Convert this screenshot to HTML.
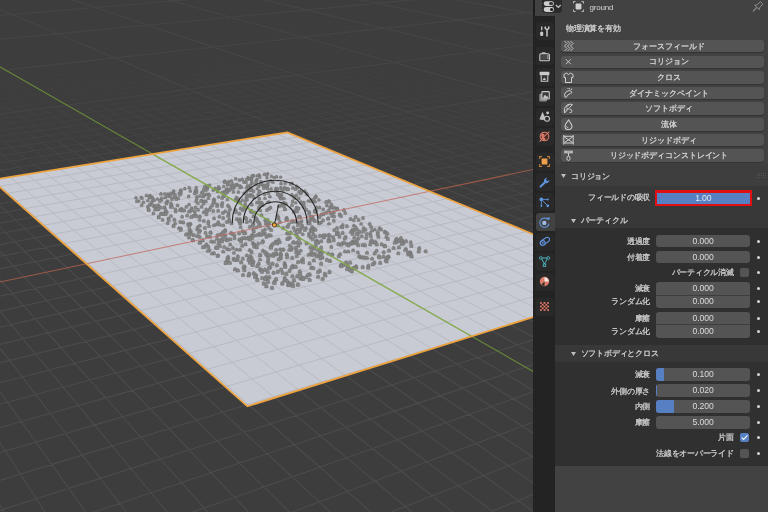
<!DOCTYPE html>
<html><head><meta charset="utf-8">
<style>
*{box-sizing:border-box}
html,body{margin:0;padding:0;width:768px;height:512px;overflow:hidden;background:#3d3d3d;font-family:"Liberation Sans",sans-serif}
.abs{position:absolute}
#props{-webkit-text-stroke:0.25px currentColor;position:absolute;left:533px;top:0;width:235px;height:512px;background:#424242;will-change:transform}
.t{position:absolute;color:#d6d6d6;font-size:7.7px;letter-spacing:-0.2px;line-height:10px;white-space:nowrap}
.btn{position:absolute;left:28px;width:203px;height:12.6px;background:#545454;border-radius:3px;box-shadow:0 1px 1px #333}
.btn .lbl{position:absolute;left:13px;right:0;top:1.9px;text-align:center;color:#d8d8d8;font-size:7.7px;letter-spacing:-0.1px;line-height:10px;white-space:nowrap}
.btn svg{position:absolute;left:3px;top:1px}
.fld{position:absolute;left:123px;width:94.3px;background:#545454;border-radius:3px;overflow:hidden}
.fld .v{-webkit-text-stroke:0;position:absolute;left:0;right:0;text-align:center;color:#dcdcdc;font-size:8.6px;line-height:12.4px;top:0}
.lab{position:absolute;right:118px;color:#d2d2d2;font-size:7.7px;letter-spacing:-0.3px;line-height:10px;white-space:nowrap;text-align:right}
.dot{position:absolute;left:223.8px;width:3px;height:3px;border-radius:50%;background:#d8d8d8}
.cb{position:absolute;left:206.8px;width:9px;height:9px;border-radius:2px;background:#545454}
.tab{position:absolute;left:3px;width:18.5px;background:#2a2a2a;border-radius:3px}
.ti{position:absolute;left:6px;width:11px;height:11px}
</style></head><body>
<svg width="533" height="512" viewBox="0 0 533 512" style="position:absolute;left:0;top:0"><defs><linearGradient id="fade" gradientUnits="userSpaceOnUse" x1="0" y1="0" x2="0" y2="512"><stop offset="0" stop-color="#fff" stop-opacity="0.05"/><stop offset="0.1" stop-color="#fff" stop-opacity="0.3"/><stop offset="0.2" stop-color="#fff" stop-opacity="0.65"/><stop offset="0.35" stop-color="#fff" stop-opacity="0.95"/><stop offset="1" stop-color="#fff" stop-opacity="1"/></linearGradient><mask id="m" maskUnits="userSpaceOnUse" x="0" y="0" width="533" height="512"><rect width="533" height="512" fill="url(#fade)"/></mask><clipPath id="cp"><rect width="533" height="512"/></clipPath></defs><rect width="533" height="512" fill="#3d3d3d"/><g clip-path="url(#cp)" stroke="#4b4b4b" stroke-width="1.15" fill="none" stroke-linecap="round"><path stroke-opacity="0.1" d="M-1.3 82.7L-36.1 61.4M13 82.6L-23.1 61.2M41.5 82.3L2.8 60.9M2.8 60.9L-29.5 43.1M55.8 82.1L15.8 60.8M15.8 60.8L-17.6 43M70 82L28.7 60.6M28.7 60.6L-5.8 42.8M84.3 81.8L41.6 60.5M41.6 60.5L6.1 42.7M98.5 81.7L54.5 60.3M54.5 60.3L17.9 42.5M112.7 81.5L67.4 60.2M67.4 60.2L29.7 42.4M126.9 81.4L80.3 60M80.3 60L41.5 42.2M141.1 81.2L93.2 59.9M93.2 59.9L53.3 42.1M155.2 81.1L106.1 59.7M106.1 59.7L65.1 41.9M183.5 80.8L131.7 59.4M131.7 59.4L88.6 41.7M88.6 41.7L52 26.6M531.7 86.4L605.6 74.7M197.6 80.6L144.6 59.3M144.6 59.3L100.3 41.5M100.3 41.5L62.9 26.5M501.3 85.5L576.8 73.9M157.4 59.1L112 41.4M112 41.4L73.7 26.3M471.1 84.7L548.1 73.1M170.1 59L123.7 41.2M123.7 41.2L84.5 26.2M441.1 83.9L519.7 72.3M519.7 72.3L591.1 61.7M182.9 58.9L135.4 41.1M135.4 41.1L95.2 26.1M411.4 83.1L491.5 71.5M491.5 71.5L564.3 61M195.7 58.7L147.1 41M147.1 41L106 25.9M381.9 82.3L463.4 70.7M463.4 70.7L537.6 60.2M537.6 60.2L605.3 50.6M208.4 58.6L158.8 40.8M158.8 40.8L116.8 25.8M435.6 70L511.1 59.5M511.1 59.5L580.1 49.9M221.2 58.4L170.4 40.7M170.4 40.7L127.5 25.7M408 69.2L484.9 58.7M484.9 58.7L555 49.2M233.9 58.3L182.1 40.5M182.1 40.5L138.2 25.5M380.6 68.4L458.8 58M458.8 58L530.2 48.5M259.3 58L205.3 40.2M205.3 40.2L159.6 25.2M326.4 66.9L407.2 56.5M407.2 56.5L481 47.1M272 57.8L216.9 40.1M216.9 40.1L170.3 25.1M299.6 66.2L381.7 55.8M381.7 55.8L456.7 46.4M456.7 46.4L525.3 37.7M284.6 57.7L228.5 40M228.5 40L181 25M273 65.5L356.4 55.1M356.4 55.1L432.6 45.7M432.6 45.7L502.3 37M297.3 57.5L240.1 39.8M240.1 39.8L191.7 24.8M246.6 64.7L331.3 54.4M331.3 54.4L408.6 45M408.6 45L479.4 36.4M309.9 57.4L251.6 39.7M251.6 39.7L202.3 24.7M125.7 75.3L220.4 64M220.4 64L306.4 53.7M306.4 53.7L384.8 44.3M384.8 44.3L456.7 35.7M322.5 57.3L263.2 39.5M263.2 39.5L213 24.6M98.2 74.6L194.3 63.3M194.3 63.3L281.6 53M281.6 53L361.2 43.6M361.2 43.6L434.2 35M407.8 78.4L335.2 57.1M335.2 57.1L274.7 39.4M274.7 39.4L223.6 24.4M70.9 73.9L168.4 62.6M168.4 62.6L257 52.3M257 52.3L337.8 42.9M337.8 42.9L411.8 34.4M421.7 78.2L347.8 57M347.8 57L286.2 39.3M286.2 39.3L234.2 24.3M-65.7 85.6L43.8 73.1M43.8 73.1L142.8 61.8M142.8 61.8L232.6 51.6M232.6 51.6L314.6 42.3M314.6 42.3L389.6 33.7M435.5 78.1L360.3 56.8M360.3 56.8L297.7 39.1M297.7 39.1L244.8 24.2M-94.1 84.8L16.9 72.4M16.9 72.4L117.3 61.1M117.3 61.1L208.4 50.9M208.4 50.9L291.5 41.6M291.5 41.6L367.5 33.1M463.3 77.8L385.5 56.5M385.5 56.5L320.7 38.8M320.7 38.8L266 23.9M-36.3 70.9L66.8 59.7M66.8 59.7L160.4 49.6M160.4 49.6L245.8 40.3M245.8 40.3L323.9 31.8M323.9 31.8L395.8 24M477.1 77.6L398 56.4M398 56.4L332.2 38.7M332.2 38.7L276.5 23.8M-62.6 70.2L41.9 59M41.9 59L136.7 48.9M136.7 48.9L223.2 39.7M223.2 39.7L302.4 31.2M302.4 31.2L375.1 23.4M589.4 103.5L490.9 77.5M490.9 77.5L410.6 56.2M410.6 56.2L343.6 38.6M343.6 38.6L287.1 23.6M-88.8 69.5L17.1 58.4M17.1 58.4L113.2 48.2M113.2 48.2L200.8 39M200.8 39L281 30.6M281 30.6L354.6 22.8M604.8 103.3L504.8 77.3M504.8 77.3L423.1 56.1M423.1 56.1L355.1 38.4M355.1 38.4L297.6 23.5M-7.5 57.7L89.8 47.6M89.8 47.6L178.5 38.4M178.5 38.4L259.7 29.9M259.7 29.9L334.3 22.2M620.2 103.2L518.6 77.2M518.6 77.2L435.6 56M435.6 56L366.5 38.3M366.5 38.3L308.1 23.4M-32 57L66.6 46.9M66.6 46.9L156.4 37.7M156.4 37.7L238.6 29.3M238.6 29.3L314.1 21.6M635.6 103L532.4 77M532.4 77L448.1 55.8M448.1 55.8L377.9 38.2M377.9 38.2L318.6 23.2M-56.3 56.3L43.5 46.3M43.5 46.3L134.4 37.1M134.4 37.1L217.7 28.7M217.7 28.7L294.1 21M546.1 76.9L460.6 55.7M460.6 55.7L389.3 38M389.3 38L329.1 23.1M-80.4 55.7L20.6 45.6M20.6 45.6L112.6 36.5M112.6 36.5L196.9 28.1M559.9 76.7L473 55.5M473 55.5L400.7 37.9M400.7 37.9L339.6 23M-104.3 55L-2.1 45M-2.1 45L91 35.9M91 35.9L176.2 27.5M573.7 76.6L485.5 55.4M485.5 55.4L412.1 37.7M412.1 37.7L350.1 22.8M-24.7 44.3L69.5 35.2M601.1 76.3L510.3 55.1M510.3 55.1L434.8 37.5M-69.4 43.1L27 34M614.8 76.1L522.7 55M522.7 55L446.2 37.3M628.5 76L535.2 54.8M535.2 54.8L457.5 37.2M547.5 54.7L468.8 37.1M559.9 54.5L480.1 36.9M572.3 54.4L491.4 36.8"/><path stroke-opacity="0.2" d="M9.3 109.1L-30 83M25.2 109L-15.6 82.9M41.1 108.8L-1.3 82.7M57 108.7L13 82.6M88.8 108.3L41.5 82.3M104.6 108.2L55.8 82.1M120.5 108L70 82M136.3 107.9L84.3 81.8M152.1 107.7L98.5 81.7M167.9 107.6L112.7 81.5M532.9 118.1L614 103.6M183.7 107.4L126.9 81.4M497.7 117.2L580.7 102.7M199.5 107.3L141.1 81.2M462.7 116.3L547.7 101.9M215.2 107.1L155.2 81.1M427.9 115.4L514.8 101M514.8 101L593.1 88M246.7 106.8L183.5 80.8M449.9 99.3L531.7 86.4M417.8 98.4L501.3 85.5M211.7 80.5L157.4 59.1M386 97.6L471.1 84.7M225.8 80.3L170.1 59M354.4 96.7L441.1 83.9M239.9 80.2L182.9 58.9M322.9 95.9L411.4 83.1M254 80L195.7 58.7M291.8 95.1L381.9 82.3M268 79.9L208.4 58.6M352.6 81.5L435.6 70M282 79.7L221.2 58.4M230.1 93.4L323.5 80.7M323.5 80.7L408 69.2M296.1 79.6L233.9 58.3M199.6 92.6L294.6 79.9M294.6 79.9L380.6 68.4M403.3 105.3L324.1 79.3M324.1 79.3L259.3 58M29.8 105.1L139.2 91M139.2 91L237.5 78.4M237.5 78.4L326.4 66.9M418.8 105.1L338 79.1M338 79.1L272 57.8M-126.2 120L-1.9 104.3M-1.9 104.3L109.3 90.2M109.3 90.2L209.2 77.6M209.2 77.6L299.6 66.2M434.4 105L352 79M352 79L284.6 57.7M-33.3 103.4L79.6 89.4M79.6 89.4L181.2 76.8M181.2 76.8L273 65.5M450 104.8L366 78.8M366 78.8L297.3 57.5M-64.6 102.6L50.2 88.7M50.2 88.7L153.3 76.1M153.3 76.1L246.6 64.7M465.5 104.7L379.9 78.7M379.9 78.7L309.9 57.4M-95.6 101.8L20.9 87.9M20.9 87.9L125.7 75.3M590.1 137L481 104.5M481 104.5L393.8 78.5M393.8 78.5L322.5 57.3M-8.2 87.1L98.2 74.6M607.7 136.9L496.6 104.4M496.6 104.4L407.8 78.4M-37 86.3L70.9 73.9M625.2 136.7L512.1 104.2M512.1 104.2L421.7 78.2M642.7 136.6L527.5 104.1M527.5 104.1L435.5 78.1M558.5 103.8L463.3 77.8M573.9 103.6L477.1 77.6"/><path stroke-opacity="0.3" d="M4.4 142.1L-38.6 109.6M22.3 141.9L-22.6 109.4M40.3 141.8L-6.7 109.3M58.2 141.6L9.3 109.1M76.1 141.5L25.2 109M94.1 141.3L41.1 108.8M503.2 156.3L594.8 138M518.1 136.1L604.2 119.9M480.1 135.2L568.4 119M442.4 134.2L532.9 118.1M405 133.3L497.7 117.2M367.8 132.3L462.7 116.3M359.2 113.6L449.9 99.3M262.4 106.6L197.6 80.6M325.2 112.7L417.8 98.4M278.1 106.5L211.7 80.5M291.5 111.8L386 97.6M293.8 106.3L225.8 80.3M258 111L354.4 96.7M309.5 106.2L239.9 80.2M114.9 126L224.7 110.1M224.7 110.1L322.9 95.9M325.2 106L254 80M79.7 125.1L191.6 109.3M191.6 109.3L291.8 95.1M431.8 138.4L340.8 105.9M340.8 105.9L268 79.9M44.8 124.2L158.8 108.4M158.8 108.4L260.8 94.2M260.8 94.2L352.6 81.5M449.4 138.3L356.4 105.7M356.4 105.7L282 79.7M-120.4 141.2L10.2 123.4M10.2 123.4L126.2 107.6M126.2 107.6L230.1 93.4M467.1 138.1L372.1 105.6M372.1 105.6L296.1 79.6M-24.3 122.5L93.9 106.7M93.9 106.7L199.6 92.6M502.3 137.8L403.3 105.3M-92.4 120.8L29.8 105.1M519.9 137.7L418.8 105.1M537.5 137.5L434.4 105M555 137.3L450 104.8M572.6 137.2L465.5 104.7"/><path stroke-opacity="0.4" d="M111.9 141.2L57 108.7M533.2 180L628 159.3M147.7 140.9L88.8 108.3M165.5 140.7L104.6 108.2M183.4 140.6L120.5 108M462.2 155.3L556.3 137.1M201.2 140.4L136.3 107.9M421.5 154.3L518.1 136.1M219 140.2L152.1 107.7M381 153.3L480.1 135.2M236.8 140.1L167.9 107.6M340.8 152.3L442.4 134.2M254.6 139.9L183.7 107.4M272.4 139.8L199.5 107.3M290.2 139.6L215.2 107.1M330.9 131.4L427.9 115.4M325.7 139.3L246.7 106.8M257.9 129.6L359.2 113.6M343.4 139.2L262.4 106.6M105.5 146.6L221.8 128.7M221.8 128.7L325.2 112.7M361.1 139L278.1 106.5M67.2 145.7L185.9 127.8M185.9 127.8L291.5 111.8M378.8 138.9L293.8 106.3M29.2 144.8L150.3 126.9M150.3 126.9L258 111M396.5 138.7L309.5 106.2M-8.6 143.9L114.9 126M414.1 138.6L325.2 106M-46.1 143L79.7 125.1M548.8 180.2L431.8 138.4M-83.4 142.1L44.8 124.2M569 180.1L449.4 138.3M589.2 179.9L467.1 138.1M629.7 179.6L502.3 137.8M649.9 179.5L519.9 137.7M670.1 179.4L537.5 137.5"/><path stroke-opacity="0.5" d="M18.3 184L-31.6 142.4M38.9 183.9L-13.6 142.2M59.4 183.7L4.4 142.1M79.9 183.6L22.3 141.9M100.4 183.4L40.3 141.8M522.3 205.6L623.7 182.1M443.9 177.9L544.5 157.3M399.7 176.8L503.2 156.3M355.8 175.8L462.2 155.3M300.9 151.4L405 133.3M261.3 150.4L367.8 132.3M222 149.4L330.9 131.4M427 181.1L325.7 139.3M15.2 167.9L144.1 147.6M144.1 147.6L257.9 129.6M447.4 180.9L343.4 139.2M-26.1 167L105.5 146.6M467.7 180.8L361.1 139M-67.2 166L67.2 145.7M487.9 180.7L378.8 138.9M-108 165L29.2 144.8M508.2 180.5L396.5 138.7M528.5 180.4L414.1 138.6"/><path stroke-opacity="0.6" d="M120.9 183.3L58.2 141.6M141.4 183.1L76.1 141.5M161.9 183L94.1 141.3M473.6 204.6L578.3 181M182.4 182.8L111.9 141.2M425.2 203.5L533.2 180M223.2 182.5L147.7 140.9M243.7 182.4L165.5 140.7M264.1 182.3L183.4 140.6M284.5 182.1L201.2 140.4M312.2 174.8L421.5 154.3M304.9 182L219 140.2M268.9 173.8L381 153.3M325.3 181.8L236.8 140.1M345.7 181.7L254.6 139.9M183.2 171.8L300.9 151.4M366 181.5L272.4 139.8M140.8 170.8L261.3 150.4M386.4 181.4L290.2 139.6M-42 193.1L98.6 169.9M98.6 169.9L222 149.4M-131.9 191.1L15.2 167.9M609.6 236.5L467.7 180.8M633.4 236.3L487.9 180.7M657.2 236.2L508.2 180.5M680.9 236.1L528.5 180.4M-2.2 184.2L-49.6 142.6M406.7 181.2L307.9 139.5M307.9 139.5L231 107M231 107L169.4 80.9M169.4 80.9L118.9 59.6M118.9 59.6L76.8 41.8M76.8 41.8L41.2 26.7M41.2 26.7L10.7 13.8M10.7 13.8L-15.8 2.6M-87.1 192.1L56.8 168.9M56.8 168.9L182.9 148.5M182.9 148.5L294.3 130.5M294.3 130.5L393.5 114.5M393.5 114.5L482.3 100.1M482.3 100.1L562.3 87.2M609.5 179.8L484.7 138M484.7 138L387.7 105.4M387.7 105.4L310.1 79.4M310.1 79.4L246.6 58.1M246.6 58.1L193.7 40.4M193.7 40.4L148.9 25.4M148.9 25.4L110.6 12.5M110.6 12.5L77.4 1.4M77.4 1.4L48.3 -8.4M-58.5 121.7L61.7 105.9M61.7 105.9L169.3 91.8M169.3 91.8L266 79.1M266 79.1L353.4 67.7M353.4 67.7L432.9 57.3M432.9 57.3L505.5 47.8M505.5 47.8L572 39.1M543 103.9L449.4 77.9M449.4 77.9L372.9 56.7M372.9 56.7L309.2 39M309.2 39L255.4 24M255.4 24L209.3 11.2M209.3 11.2L169.3 0.1M169.3 0.1L134.4 -9.6M-9.8 71.7L92 60.4M92 60.4L184.3 50.2M184.3 50.2L268.5 41M268.5 41L345.7 32.4M345.7 32.4L416.5 24.6M416.5 24.6L481.9 17.4M481.9 17.4L542.4 10.7M587.4 76.4L497.9 55.2M497.9 55.2L423.5 37.6M423.5 37.6L360.6 22.7M360.6 22.7L306.7 9.9M306.7 9.9L260.1 -1.1M260.1 -1.1L219.3 -10.7M-47.1 43.7L48.2 34.6M48.2 34.6L135.3 26.3M135.3 26.3L215.4 18.7M215.4 18.7L289.2 11.6M289.2 11.6L357.4 5.1M357.4 5.1L420.6 -0.9M420.6 -0.9L479.4 -6.5M621.6 53.8L536.4 36.2M536.4 36.2L464.5 21.4M464.5 21.4L403 8.7M403 8.7L349.7 -2.3M349.7 -2.3L303.2 -11.9M-60.7 20.6L28.1 13.1M28.1 13.1L109.8 6.3M109.8 6.3L185.3 -0.1M185.3 -0.1L255.3 -6M567.2 20.1L498 7.4M498 7.4L438.2 -3.5M438.2 -3.5L385.9 -13.1M-57.6 1.2L24.8 -5M24.8 -5L101.2 -10.7"/><path stroke-opacity="0.7" d="M512.3 234.9L620.8 207.8M459 233.8L571.4 206.7M329.3 201.4L443.9 177.9M281.8 200.3L399.7 176.8M141.2 197.2L268.9 173.8M95 196.2L225.9 172.8M225.9 172.8L340.8 152.3M49 195.1L183.2 171.8M-154.9 221L3.3 194.1M3.3 194.1L140.8 170.8M514.4 236.9L386.4 181.4M562 236.7L427 181.1M585.8 236.6L447.4 180.9M538.2 236.8L406.7 181.2"/><path stroke-opacity="0.8" d="M12.6 239.5L-43.4 184.4M36.5 239.4L-22.8 184.3M84.5 239.2L18.3 184M108.4 239L38.9 183.9M132.4 238.9L59.4 183.7M503.2 268.6L619.9 237.2M156.3 238.8L79.9 183.6M406 232.7L522.3 205.6M353.4 231.6L473.6 204.6M234.6 199.3L355.8 175.8M395.2 237.6L284.5 182.1M44.6 225.1L187.8 198.2M187.8 198.2L312.2 174.8M419.1 237.4L304.9 182M-5.7 224.1L141.2 197.2M442.9 237.3L325.3 181.8M-55.8 223L95 196.2M466.8 237.2L345.7 181.7M-105.5 222L49 195.1M490.6 237.1L366 181.5M60.5 239.3L-2.2 184.2"/><path stroke-opacity="0.9" d="M444.7 267.5L565.9 236M180.2 238.7L100.4 183.4M386.5 266.3L512.3 234.9M204.1 238.6L120.9 183.3M228.1 238.4L141.4 183.1M252 238.3L161.9 183M275.9 238.2L182.4 182.8M301.2 230.5L425.2 203.5M323.6 237.9L223.2 182.5M197.6 228.3L329.3 201.4M347.5 237.8L243.7 182.4M146.3 227.3L281.8 200.3M371.4 237.7L264.1 182.3M-66.6 257.5L95.3 226.2M95.3 226.2L234.6 199.3M-121.7 256.4L44.6 225.1M607 314.7L442.9 237.3M635.8 314.7L466.8 237.2M664.5 314.6L490.6 237.1M693.2 314.5L514.4 236.9M721.9 314.5L538.2 236.8"/><path stroke-opacity="1.0" d="M9.6 521.2L1.6 507.5M1.6 507.5L-6.2 494.4M50.8 521.1L41.9 507.4M41.9 507.4L33.4 494.3M33.4 494.3L25.2 481.6M25.2 481.6L17.3 469.5M17.3 469.5L9.7 457.8M9.7 457.8L2.4 446.5M2.4 446.5L-4.7 435.6M-4.7 435.6L-11.5 425.2M92 521L82.3 507.3M82.3 507.3L72.9 494.2M72.9 494.2L63.9 481.5M63.9 481.5L55.3 469.4M55.3 469.4L47 457.7M47 457.7L39 446.4M39 446.4L31.3 435.5M31.3 435.5L23.9 425.1M23.9 425.1L16.7 415M16.7 415L9.7 405.2M9.7 405.2L3 395.8M3 395.8L-3.4 386.6M-3.4 386.6L-9.7 377.8M490.1 556.6L668.9 476.8M133.2 520.9L122.6 507.2M122.6 507.2L112.5 494.1M112.5 494.1L102.7 481.4M102.7 481.4L93.4 469.3M93.4 469.3L84.3 457.6M84.3 457.6L75.6 446.3M75.6 446.3L67.3 435.5M67.3 435.5L59.2 425M59.2 425L51.4 414.9M51.4 414.9L43.9 405.1M43.9 405.1L36.6 395.7M36.6 395.7L29.6 386.6M29.6 386.6L22.8 377.7M22.8 377.7L16.2 369.2M16.2 369.2L9.8 360.9M9.8 360.9L3.6 352.9M3.6 352.9L-2.4 345.1M-2.4 345.1L-8.2 337.6M386.1 555.9L577.2 475.8M174.4 520.8L163 507.1M163 507.1L152 494M152 494L141.5 481.3M141.5 481.3L131.4 469.2M131.4 469.2L121.7 457.5M121.7 457.5L112.3 446.2M112.3 446.2L103.2 435.4M103.2 435.4L94.5 424.9M94.5 424.9L86.1 414.8M86.1 414.8L78 405M78 405L70.1 395.6M70.1 395.6L62.6 386.5M62.6 386.5L55.2 377.7M55.2 377.7L48.1 369.1M48.1 369.1L41.2 360.8M41.2 360.8L34.6 352.8M34.6 352.8L28.1 345.1M28.1 345.1L21.8 337.5M21.8 337.5L15.7 330.2M15.7 330.2L9.8 323.1M9.8 323.1L4.1 316.2M4.1 316.2L-59.4 239.9M282.3 555.1L485.7 474.8M485.7 474.8L648.2 410.7M215.6 520.7L203.3 507M203.3 507L191.6 493.9M191.6 493.9L180.3 481.2M180.3 481.2L169.4 469.1M169.4 469.1L159 457.4M159 457.4L148.9 446.1M148.9 446.1L139.2 435.3M139.2 435.3L129.9 424.8M129.9 424.8L120.8 414.7M120.8 414.7L112.1 404.9M112.1 404.9L103.7 395.5M103.7 395.5L95.5 386.4M95.5 386.4L87.7 377.6M87.7 377.6L80 369M80 369L72.7 360.8M72.7 360.8L65.5 352.8M65.5 352.8L58.6 345M58.6 345L51.8 337.5M51.8 337.5L45.3 330.1M45.3 330.1L39 323.1M39 323.1L32.8 316.2M32.8 316.2L-35.4 239.8M178.8 554.3L394.7 473.8M394.7 473.8L566.9 409.6M256.7 520.6L243.7 506.9M243.7 506.9L231.1 493.8M231.1 493.8L219.1 481.2M219.1 481.2L207.5 469M207.5 469L196.3 457.3M196.3 457.3L185.6 446M185.6 446L175.2 435.2M175.2 435.2L165.2 424.7M165.2 424.7L155.6 414.6M155.6 414.6L146.2 404.9M146.2 404.9L137.2 395.4M137.2 395.4L128.5 386.3M128.5 386.3L120.1 377.5M120.1 377.5L112 369M112 369L104.1 360.7M104.1 360.7L96.4 352.7M96.4 352.7L89 344.9M89 344.9L81.8 337.4M81.8 337.4L74.9 330.1M74.9 330.1L68.1 323M68.1 323L61.5 316.1M61.5 316.1L-11.4 239.7M75.6 553.5L304 472.8M304 472.8L486 408.5M486 408.5L634.4 356M297.9 520.5L284 506.8M284 506.8L270.7 493.7M270.7 493.7L257.9 481.1M257.9 481.1L245.5 468.9M245.5 468.9L233.6 457.2M233.6 457.2L222.2 446M222.2 446L211.2 435.1M211.2 435.1L200.5 424.6M200.5 424.6L190.3 414.5M190.3 414.5L180.4 404.8M180.4 404.8L170.8 395.3M170.8 395.3L161.5 386.2M161.5 386.2L152.6 377.4M152.6 377.4L143.9 368.9M143.9 368.9L135.5 360.6M135.5 360.6L127.4 352.6M127.4 352.6L119.5 344.8M119.5 344.8L111.9 337.3M111.9 337.3L104.4 330M104.4 330L97.2 322.9M97.2 322.9L90.2 316M90.2 316L12.6 239.5M-27.2 552.8L213.6 471.8M213.6 471.8L405.4 407.4M405.4 407.4L561.8 354.9M339.1 520.4L324.4 506.7M324.4 506.7L310.2 493.6M310.2 493.6L296.6 481M296.6 481L283.6 468.8M283.6 468.8L271 457.1M271 457.1L258.8 445.9M258.8 445.9L247.2 435M247.2 435L235.9 424.5M235.9 424.5L225 414.4M225 414.4L214.5 404.7M214.5 404.7L204.3 395.3M204.3 395.3L194.5 386.1M194.5 386.1L185 377.3M185 377.3L175.9 368.8M175.9 368.8L167 360.5M167 360.5L158.3 352.5M158.3 352.5L150 344.8M150 344.8L141.9 337.2M141.9 337.2L134 329.9M134 329.9L126.4 322.8M126.4 322.8L118.9 316M118.9 316L36.5 239.4M-129.8 552L123.6 470.9M123.6 470.9L325.3 406.3M325.3 406.3L489.5 353.7M489.5 353.7L625.9 310.1M421.5 520.2L405.1 506.5M405.1 506.5L389.3 493.4M389.3 493.4L374.2 480.8M374.2 480.8L359.6 468.6M359.6 468.6L345.6 456.9M345.6 456.9L332.1 445.7M332.1 445.7L319.1 434.8M319.1 434.8L306.6 424.4M306.6 424.4L294.4 414.3M294.4 414.3L282.8 404.5M282.8 404.5L271.5 395.1M271.5 395.1L260.5 386M260.5 386L250 377.2M250 377.2L239.7 368.6M239.7 368.6L229.8 360.4M229.8 360.4L220.2 352.4M220.2 352.4L210.9 344.6M210.9 344.6L201.9 337.1M201.9 337.1L193.1 329.8M193.1 329.8L184.6 322.7M184.6 322.7L176.4 315.8M176.4 315.8L84.5 239.2M-55.4 468.9L166 404.1M166 404.1L346.1 351.4M346.1 351.4L495.5 307.7M495.5 307.7L621.3 270.9M462.7 520.1L445.4 506.4M445.4 506.4L428.9 493.3M428.9 493.3L413 480.7M413 480.7L397.7 468.5M397.7 468.5L382.9 456.8M382.9 456.8L368.8 445.6M368.8 445.6L355.1 434.7M355.1 434.7L341.9 424.3M341.9 424.3L329.2 414.2M329.2 414.2L316.9 404.4M316.9 404.4L305 395M305 395L293.5 385.9M293.5 385.9L282.4 377.1M282.4 377.1L271.7 368.6M271.7 368.6L261.2 360.3M261.2 360.3L251.2 352.3M251.2 352.3L241.4 344.5M241.4 344.5L231.9 337M231.9 337L222.7 329.7M222.7 329.7L213.8 322.6M213.8 322.6L205.1 315.7M205.1 315.7L108.4 239M-144.3 467.9L87 403.1M87 403.1L275 350.3M275 350.3L430.8 306.6M430.8 306.6L562.1 269.8M503.9 520L485.8 506.3M485.8 506.3L468.4 493.2M468.4 493.2L451.8 480.6M451.8 480.6L435.7 468.4M435.7 468.4L420.3 456.8M420.3 456.8L405.4 445.5M405.4 445.5L391.1 434.7M391.1 434.7L377.2 424.2M377.2 424.2L363.9 414.1M363.9 414.1L351 404.4M351 404.4L338.6 394.9M338.6 394.9L326.5 385.8M326.5 385.8L314.9 377M314.9 377L303.6 368.5M303.6 368.5L292.7 360.2M292.7 360.2L282.1 352.2M282.1 352.2L271.8 344.5M271.8 344.5L261.9 336.9M261.9 336.9L252.3 329.6M252.3 329.6L242.9 322.5M242.9 322.5L233.8 315.7M233.8 315.7L132.4 238.9M-233 467L8.2 402M8.2 402L204.2 349.2M204.2 349.2L366.5 305.4M366.5 305.4L503.2 268.6M545.1 519.9L526.1 506.2M526.1 506.2L508 493.1M508 493.1L490.5 480.5M490.5 480.5L473.8 468.3M473.8 468.3L457.6 456.7M457.6 456.7L442 445.4M442 445.4L427 434.6M427 434.6L412.6 424.1M412.6 424.1L398.6 414M398.6 414L385.1 404.3M385.1 404.3L372.1 394.8M372.1 394.8L359.5 385.7M359.5 385.7L347.3 376.9M347.3 376.9L335.5 368.4M335.5 368.4L324.1 360.1M324.1 360.1L313 352.1M313 352.1L302.3 344.4M302.3 344.4L291.9 336.9M291.9 336.9L281.8 329.6M281.8 329.6L272 322.5M272 322.5L262.5 315.6M262.5 315.6L156.3 238.8M-70.1 400.9L133.8 348.1M133.8 348.1L302.6 304.3M302.6 304.3L444.7 267.5M547.5 493L529.3 480.4M529.3 480.4L511.8 468.3M511.8 468.3L494.9 456.6M494.9 456.6L478.7 445.3M478.7 445.3L463 434.5M463 434.5L447.9 424M447.9 424L433.3 413.9M433.3 413.9L419.3 404.2M419.3 404.2L405.7 394.8M405.7 394.8L392.5 385.7M392.5 385.7L379.8 376.8M379.8 376.8L367.5 368.3M367.5 368.3L355.5 360.1M355.5 360.1L344 352.1M344 352.1L332.8 344.3M332.8 344.3L321.9 336.8M321.9 336.8L311.4 329.5M311.4 329.5L301.2 322.4M301.2 322.4L291.2 315.5M291.2 315.5L180.2 238.7M-148.1 399.8L63.7 346.9M63.7 346.9L239 303.2M239 303.2L386.5 266.3M549.8 468.2L532.3 456.5M532.3 456.5L515.3 445.2M515.3 445.2L499 434.4M499 434.4L483.3 423.9M483.3 423.9L468.1 413.8M468.1 413.8L453.4 404.1M453.4 404.1L439.2 394.7M439.2 394.7L425.5 385.6M425.5 385.6L412.2 376.8M412.2 376.8L399.4 368.2M399.4 368.2L387 360M387 360L374.9 352M374.9 352L363.3 344.2M363.3 344.2L351.9 336.7M351.9 336.7L341 329.4M341 329.4L330.3 322.3M330.3 322.3L319.9 315.5M319.9 315.5L204.1 238.6M-6 345.8L175.8 302M175.8 302L328.7 265.2M328.7 265.2L459 233.8M552 445.1L535 434.3M535 434.3L518.6 423.8M518.6 423.8L502.8 413.8M502.8 413.8L487.5 404M487.5 404L472.8 394.6M472.8 394.6L458.5 385.5M458.5 385.5L444.7 376.7M444.7 376.7L431.3 368.2M431.3 368.2L418.4 359.9M418.4 359.9L405.9 351.9M405.9 351.9L393.7 344.2M393.7 344.2L381.9 336.6M381.9 336.6L370.5 329.3M370.5 329.3L359.4 322.3M359.4 322.3L348.6 315.4M348.6 315.4L228.1 238.4M-75.3 344.7L113 300.9M113 300.9L271.2 264.1M271.2 264.1L406 232.7M553.9 423.8L537.5 413.7M537.5 413.7L521.6 403.9M521.6 403.9L506.3 394.5M506.3 394.5L491.5 385.4M491.5 385.4L477.2 376.6M477.2 376.6L463.3 368.1M463.3 368.1L449.8 359.8M449.8 359.8L436.8 351.8M436.8 351.8L424.2 344.1M424.2 344.1L412 336.6M412 336.6L400.1 329.3M400.1 329.3L388.5 322.2M388.5 322.2L377.4 315.3M377.4 315.3L252 238.3M-144.3 343.6L50.5 299.8M50.5 299.8L214.1 263M214.1 263L353.4 231.6M555.8 403.8L539.9 394.4M539.9 394.4L524.5 385.3M524.5 385.3L509.6 376.5M509.6 376.5L495.2 368M495.2 368L481.3 359.8M481.3 359.8L467.8 351.8M467.8 351.8L454.7 344M454.7 344L442 336.5M442 336.5L429.6 329.2M429.6 329.2L417.7 322.1M417.7 322.1L406.1 315.2M406.1 315.2L275.9 238.2M-11.7 298.7L157.3 261.9M157.3 261.9L301.2 230.5M544.1 359.6L529.7 351.6M529.7 351.6L515.6 343.9M515.6 343.9L502 336.3M502 336.3L488.8 329.1M488.8 329.1L475.9 322M475.9 322L463.5 315.1M463.5 315.1L323.6 237.9M-135 296.5L44.7 259.7M44.7 259.7L197.6 228.3M546.1 343.8L532 336.3M532 336.3L518.3 329M518.3 329L505.1 321.9M505.1 321.9L492.2 315M492.2 315L347.5 237.8M-11.1 258.6L146.3 227.3M547.9 328.9L534.2 321.8M534.2 321.8L520.9 315M520.9 315L371.4 237.7M549.6 314.9L395.2 237.6M578.3 314.8L419.1 237.4M380.3 520.3L364.7 506.6M364.7 506.6L349.8 493.5M349.8 493.5L335.4 480.9M335.4 480.9L321.6 468.7M321.6 468.7L308.3 457M308.3 457L295.5 445.8M295.5 445.8L283.1 434.9M283.1 434.9L271.2 424.5M271.2 424.5L259.7 414.4M259.7 414.4L248.6 404.6M248.6 404.6L237.9 395.2M237.9 395.2L227.5 386.1M227.5 386.1L217.5 377.2M217.5 377.2L207.8 368.7M207.8 368.7L198.4 360.5M198.4 360.5L189.3 352.4M189.3 352.4L180.4 344.7M180.4 344.7L171.9 337.2M171.9 337.2L163.6 329.9M163.6 329.9L155.5 322.8M155.5 322.8L147.7 315.9M147.7 315.9L60.5 239.3M-232.1 551.2L34 469.9M34 469.9L245.5 405.2M245.5 405.2L417.6 352.6M417.6 352.6L560.5 308.9"/></g><path d="M-10045.8 2403.6L1819.9 -102.3" stroke="#9a5a46" stroke-width="1.1" fill="none" clip-path="url(#cp)"/><path d="M4030.6 2368.8L-342.7 -128.8" stroke="#6a8a3a" stroke-width="1.1" fill="none" clip-path="url(#cp)"/><clipPath id="pc"><path d="M-8.2 179.9L287.4 132.4L647.3 281.5L247.4 406.3Z"/></clipPath><path d="M-8.2 179.9L287.4 132.4L647.3 281.5L247.4 406.3Z" fill="#c8cbd3"/><path clip-path="url(#pc)" d="M263.9 487L-62.8 165.3M211 472.7L750.2 291.6M292.3 477L-46 162.8M189.2 449.9L720.3 279.9M319.9 467.2L-29.4 160.3M168.9 428.6L691.9 268.7M346.6 457.8L-13.1 157.8M150 408.8L665 258.2M372.5 448.6L3 155.4M132.4 390.3L639.3 248.1M397.7 439.7L18.8 153M115.8 373L614.9 238.5M422.2 431.1L34.4 150.7M100.3 356.7L591.6 229.4M445.9 422.7L49.8 148.3M85.7 341.4L569.3 220.7M469 414.5L64.9 146.1M72 327.1L548.1 212.3M491.5 406.6L79.8 143.8M59 313.5L527.8 204.4M513.3 398.8L94.5 141.6M46.8 300.6L508.3 196.7M534.6 391.3L109 139.4M35.2 288.5L489.7 189.4M575.5 376.9L137.3 135.1M13.7 266L454.6 175.7M595.1 369.9L151.2 133M3.8 255.6L438.1 169.2M614.2 363.2L164.8 131M-5.7 245.7L422.2 163M632.9 356.6L178.3 128.9M-14.7 236.3L407 157M651.1 350.2L191.6 126.9M-23.2 227.3L392.2 151.2M668.8 343.9L204.7 124.9M-31.4 218.7L378.1 145.7M686.1 337.8L217.7 123M-39.3 210.5L364.4 140.3M703 331.8L230.4 121.1M-46.8 202.6L351.2 135.2M719.5 326L243 119.2M-54 195.1L338.5 130.2M735.6 320.3L255.4 117.3M-60.9 187.9L326.2 125.3M751.4 314.7L267.7 115.4M-67.5 181L314.3 120.7M766.8 309.3L279.7 113.6M-73.8 174.3L302.8 116.2" stroke="#b8bac1" stroke-width="1" fill="none"/><g fill="#868686" stroke="#6e6e6e" stroke-width="0.5"><path d="M266.5 174.8V173.2A1.3 1.3 0 0 1 269 173.2V174.8Z"/><path d="M263.1 175.7V174.2A1.3 1.3 0 0 1 265.7 174.2V175.7Z"/><path d="M258 175.9V174.4A1.3 1.3 0 0 1 260.5 174.4V175.9Z"/><path d="M265.5 176.4V174.8A1.3 1.3 0 0 1 268.1 174.8V176.4Z"/><path d="M252.3 176.9V175.4A1.3 1.3 0 0 1 254.9 175.4V176.9Z"/><path d="M256 177V175.5A1.3 1.3 0 0 1 258.6 175.5V177Z"/><path d="M251.4 177.1V175.6A1.3 1.3 0 0 1 254 175.6V177.1Z"/><path d="M270.2 177.5V175.9A1.3 1.3 0 0 1 272.7 175.9V177.5Z"/><path d="M250.7 177.5V176A1.3 1.3 0 0 1 253.3 176V177.5Z"/><path d="M275.3 178.1V176.6A1.3 1.3 0 0 1 277.9 176.6V178.1Z"/><path d="M279.5 178.3V176.8A1.3 1.3 0 0 1 282 176.8V178.3Z"/><path d="M258.5 178.4V176.8A1.3 1.3 0 0 1 261.1 176.8V178.4Z"/><path d="M272.9 178.7V177.2A1.3 1.3 0 0 1 275.4 177.2V178.7Z"/><path d="M246.7 179V177.4A1.3 1.3 0 0 1 249.3 177.4V179Z"/><path d="M265.8 179.1V177.6A1.3 1.3 0 0 1 268.3 177.6V179.1Z"/><path d="M250 179.9V178.4A1.3 1.3 0 0 1 252.6 178.4V179.9Z"/><path d="M234.4 180.1V178.6A1.3 1.3 0 0 1 237 178.6V180.1Z"/><path d="M250.4 180.2V178.7A1.3 1.3 0 0 1 253 178.7V180.2Z"/><path d="M248.1 180.4V178.8A1.3 1.3 0 0 1 250.7 178.8V180.4Z"/><path d="M245.3 180.5V178.9A1.3 1.3 0 0 1 247.8 178.9V180.5Z"/><path d="M240.9 180.7V179.1A1.3 1.3 0 0 1 243.5 179.1V180.7Z"/><path d="M255.7 181V179.4A1.3 1.3 0 0 1 258.3 179.4V181Z"/><path d="M238.1 181.4V179.8A1.3 1.3 0 0 1 240.7 179.8V181.4Z"/><path d="M254.7 181.8V180.3A1.3 1.3 0 0 1 257.3 180.3V181.8Z"/><path d="M269.4 182.1V180.5A1.3 1.3 0 0 1 272 180.5V182.1Z"/><path d="M230.1 182.3V180.7A1.3 1.3 0 0 1 232.7 180.7V182.3Z"/><path d="M223.2 182.6V181A1.3 1.3 0 0 1 225.8 181V182.6Z"/><path d="M259.7 183V181.5A1.3 1.3 0 0 1 262.3 181.5V183Z"/><path d="M227.5 183.1V181.5A1.3 1.3 0 0 1 230.1 181.5V183.1Z"/><path d="M224.1 183.1V181.5A1.3 1.3 0 0 1 226.7 181.5V183.1Z"/><path d="M250.5 183.2V181.7A1.3 1.3 0 0 1 253.1 181.7V183.2Z"/><path d="M223.2 183.4V181.8A1.3 1.3 0 0 1 225.8 181.8V183.4Z"/><path d="M242.6 183.4V181.8A1.3 1.3 0 0 1 245.2 181.8V183.4Z"/><path d="M244.8 183.5V181.9A1.3 1.3 0 0 1 247.4 181.9V183.5Z"/><path d="M271.6 183.6V182.1A1.3 1.3 0 0 1 274.2 182.1V183.6Z"/><path d="M255 184V182.5A1.3 1.3 0 0 1 257.6 182.5V184Z"/><path d="M266.7 184.1V182.5A1.3 1.3 0 0 1 269.3 182.5V184.1Z"/><path d="M283.8 184.6V183A1.3 1.3 0 0 1 286.4 183V184.6Z"/><path d="M250.8 184.7V183.2A1.3 1.3 0 0 1 253.4 183.2V184.7Z"/><path d="M290.9 184.8V183.2A1.3 1.3 0 0 1 293.5 183.2V184.8Z"/><path d="M279.7 184.9V183.3A1.3 1.3 0 0 1 282.3 183.3V184.9Z"/><path d="M259.9 185.1V183.6A1.3 1.3 0 0 1 262.5 183.6V185.1Z"/><path d="M231.3 185.1V183.6A1.3 1.3 0 0 1 233.9 183.6V185.1Z"/><path d="M289.4 185.2V183.6A1.3 1.3 0 0 1 292 183.6V185.2Z"/><path d="M226.9 185.2V183.7A1.3 1.3 0 0 1 229.5 183.7V185.2Z"/><path d="M259.9 185.5V183.9A1.3 1.3 0 0 1 262.5 183.9V185.5Z"/><path d="M254.3 185.7V184.1A1.3 1.3 0 0 1 256.9 184.1V185.7Z"/><path d="M259.4 185.9V184.3A1.3 1.3 0 0 1 262 184.3V185.9Z"/><path d="M235.8 185.9V184.3A1.3 1.3 0 0 1 238.4 184.3V185.9Z"/><path d="M235 186.2V184.6A1.3 1.3 0 0 1 237.6 184.6V186.2Z"/><path d="M226.1 186.2V184.6A1.3 1.3 0 0 1 228.7 184.6V186.2Z"/><path d="M266.5 186.4V184.8A1.3 1.3 0 0 1 269.1 184.8V186.4Z"/><path d="M249 186.5V184.9A1.3 1.3 0 0 1 251.6 184.9V186.5Z"/><path d="M208.4 186.6V185A1.3 1.3 0 0 1 211 185V186.6Z"/><path d="M234.5 186.7V185.1A1.3 1.3 0 0 1 237.1 185.1V186.7Z"/><path d="M229.9 186.8V185.2A1.3 1.3 0 0 1 232.5 185.2V186.8Z"/><path d="M262.9 187V185.4A1.3 1.3 0 0 1 265.5 185.4V187Z"/><path d="M262 187V185.4A1.3 1.3 0 0 1 264.6 185.4V187Z"/><path d="M263.5 187V185.5A1.3 1.3 0 0 1 266.1 185.5V187Z"/><path d="M238.4 187.1V185.5A1.3 1.3 0 0 1 241 185.5V187.1Z"/><path d="M246.1 187.2V185.6A1.3 1.3 0 0 1 248.7 185.6V187.2Z"/><path d="M257.4 187.4V185.8A1.3 1.3 0 0 1 260 185.8V187.4Z"/><path d="M205.7 187.4V185.8A1.3 1.3 0 0 1 208.4 185.8V187.4Z"/><path d="M265.5 187.5V185.9A1.3 1.3 0 0 1 268.1 185.9V187.5Z"/><path d="M295.3 187.6V186A1.3 1.3 0 0 1 297.9 186V187.6Z"/><path d="M222.4 187.8V186.2A1.3 1.3 0 0 1 225 186.2V187.8Z"/><path d="M203.4 187.9V186.3A1.3 1.3 0 0 1 206.1 186.3V187.9Z"/><path d="M217.1 188.3V186.7A1.3 1.3 0 0 1 219.8 186.7V188.3Z"/><path d="M265.1 188.3V186.7A1.3 1.3 0 0 1 267.7 186.7V188.3Z"/><path d="M248 188.4V186.9A1.3 1.3 0 0 1 250.6 186.9V188.4Z"/><path d="M240 188.5V186.9A1.3 1.3 0 0 1 242.7 186.9V188.5Z"/><path d="M232.8 188.5V186.9A1.3 1.3 0 0 1 235.4 186.9V188.5Z"/><path d="M230.9 188.5V186.9A1.3 1.3 0 0 1 233.6 186.9V188.5Z"/><path d="M206 188.5V186.9A1.3 1.3 0 0 1 208.7 186.9V188.5Z"/><path d="M247.2 188.7V187.1A1.3 1.3 0 0 1 249.8 187.1V188.7Z"/><path d="M283 188.8V187.2A1.3 1.3 0 0 1 285.6 187.2V188.8Z"/><path d="M194.9 188.8V187.3A1.3 1.3 0 0 1 197.5 187.3V188.8Z"/><path d="M238.7 188.9V187.3A1.3 1.3 0 0 1 241.3 187.3V188.9Z"/><path d="M279.4 189V187.4A1.3 1.3 0 0 1 282 187.4V189Z"/><path d="M187.9 189.1V187.5A1.3 1.3 0 0 1 190.6 187.5V189.1Z"/><path d="M205.9 189.1V187.5A1.3 1.3 0 0 1 208.5 187.5V189.1Z"/><path d="M295.9 189.2V187.6A1.3 1.3 0 0 1 298.6 187.6V189.2Z"/><path d="M245.2 189.3V187.7A1.3 1.3 0 0 1 247.8 187.7V189.3Z"/><path d="M291.5 189.3V187.7A1.3 1.3 0 0 1 294.1 187.7V189.3Z"/><path d="M231.6 189.6V188A1.3 1.3 0 0 1 234.3 188V189.6Z"/><path d="M218.3 189.6V188A1.3 1.3 0 0 1 220.9 188V189.6Z"/><path d="M262.5 189.6V188A1.3 1.3 0 0 1 265.2 188V189.6Z"/><path d="M213.7 189.8V188.2A1.3 1.3 0 0 1 216.3 188.2V189.8Z"/><path d="M284.9 189.9V188.3A1.3 1.3 0 0 1 287.5 188.3V189.9Z"/><path d="M274.4 189.9V188.4A1.3 1.3 0 0 1 277 188.4V189.9Z"/><path d="M183.5 190V188.4A1.3 1.3 0 0 1 186.1 188.4V190Z"/><path d="M217 190.1V188.5A1.3 1.3 0 0 1 219.7 188.5V190.1Z"/><path d="M266.5 190.1V188.5A1.3 1.3 0 0 1 269.1 188.5V190.1Z"/><path d="M255.9 190.1V188.5A1.3 1.3 0 0 1 258.5 188.5V190.1Z"/><path d="M275.5 190.2V188.6A1.3 1.3 0 0 1 278.2 188.6V190.2Z"/><path d="M275.9 190.2V188.6A1.3 1.3 0 0 1 278.5 188.6V190.2Z"/><path d="M280 190.2V188.6A1.3 1.3 0 0 1 282.6 188.6V190.2Z"/><path d="M225.4 190.4V188.8A1.3 1.3 0 0 1 228 188.8V190.4Z"/><path d="M286.2 190.4V188.8A1.3 1.3 0 0 1 288.8 188.8V190.4Z"/><path d="M250 190.4V188.8A1.3 1.3 0 0 1 252.6 188.8V190.4Z"/><path d="M287 190.4V188.8A1.3 1.3 0 0 1 289.6 188.8V190.4Z"/><path d="M269.8 190.4V188.8A1.3 1.3 0 0 1 272.5 188.8V190.4Z"/><path d="M229 190.5V188.9A1.3 1.3 0 0 1 231.7 188.9V190.5Z"/><path d="M294.1 190.5V188.9A1.3 1.3 0 0 1 296.7 188.9V190.5Z"/><path d="M213.9 190.5V188.9A1.3 1.3 0 0 1 216.6 188.9V190.5Z"/><path d="M205.8 190.5V188.9A1.3 1.3 0 0 1 208.4 188.9V190.5Z"/><path d="M202.3 190.7V189.1A1.3 1.3 0 0 1 204.9 189.1V190.7Z"/><path d="M247.5 190.7V189.1A1.3 1.3 0 0 1 250.1 189.1V190.7Z"/><path d="M285.9 190.9V189.3A1.3 1.3 0 0 1 288.6 189.3V190.9Z"/><path d="M225.8 191V189.4A1.3 1.3 0 0 1 228.4 189.4V191Z"/><path d="M226.9 191.2V189.6A1.3 1.3 0 0 1 229.6 189.6V191.2Z"/><path d="M211.9 191.4V189.8A1.3 1.3 0 0 1 214.6 189.8V191.4Z"/><path d="M281.7 191.5V189.8A1.3 1.3 0 0 1 284.4 189.8V191.5Z"/><path d="M250.1 191.5V189.9A1.3 1.3 0 0 1 252.7 189.9V191.5Z"/><path d="M179.7 191.6V190A1.3 1.3 0 0 1 182.4 190V191.6Z"/><path d="M248.7 191.6V190A1.3 1.3 0 0 1 251.4 190V191.6Z"/><path d="M204.4 191.7V190.1A1.3 1.3 0 0 1 207.1 190.1V191.7Z"/><path d="M179.2 191.8V190.2A1.3 1.3 0 0 1 181.8 190.2V191.8Z"/><path d="M195.3 191.9V190.3A1.3 1.3 0 0 1 197.9 190.3V191.9Z"/><path d="M225.6 192V190.4A1.3 1.3 0 0 1 228.3 190.4V192Z"/><path d="M227.7 192V190.4A1.3 1.3 0 0 1 230.3 190.4V192Z"/><path d="M194.1 192.2V190.6A1.3 1.3 0 0 1 196.8 190.6V192.2Z"/><path d="M299.9 192.2V190.6A1.3 1.3 0 0 1 302.6 190.6V192.2Z"/><path d="M189 192.3V190.7A1.3 1.3 0 0 1 191.6 190.7V192.3Z"/><path d="M172.4 192.4V190.8A1.3 1.3 0 0 1 175 190.8V192.4Z"/><path d="M274.4 192.4V190.8A1.3 1.3 0 0 1 277.1 190.8V192.4Z"/><path d="M303.5 192.5V190.9A1.3 1.3 0 0 1 306.1 190.9V192.5Z"/><path d="M252.2 192.7V191.1A1.3 1.3 0 0 1 254.9 191.1V192.7Z"/><path d="M194 192.8V191.2A1.3 1.3 0 0 1 196.6 191.2V192.8Z"/><path d="M245.2 192.8V191.2A1.3 1.3 0 0 1 247.8 191.2V192.8Z"/><path d="M223.2 192.8V191.2A1.3 1.3 0 0 1 225.9 191.2V192.8Z"/><path d="M257.9 192.8V191.2A1.3 1.3 0 0 1 260.6 191.2V192.8Z"/><path d="M216.4 192.9V191.3A1.3 1.3 0 0 1 219.1 191.3V192.9Z"/><path d="M258.6 193V191.4A1.3 1.3 0 0 1 261.2 191.4V193Z"/><path d="M297.6 193.2V191.6A1.3 1.3 0 0 1 300.3 191.6V193.2Z"/><path d="M232.1 193.3V191.7A1.3 1.3 0 0 1 234.8 191.7V193.3Z"/><path d="M237 193.4V191.8A1.3 1.3 0 0 1 239.7 191.8V193.4Z"/><path d="M276.3 193.4V191.8A1.3 1.3 0 0 1 279 191.8V193.4Z"/><path d="M226 193.5V191.9A1.3 1.3 0 0 1 228.6 191.9V193.5Z"/><path d="M200.5 193.8V192.2A1.3 1.3 0 0 1 203.1 192.2V193.8Z"/><path d="M195.1 193.9V192.3A1.3 1.3 0 0 1 197.8 192.3V193.9Z"/><path d="M299.9 193.9V192.3A1.3 1.3 0 0 1 302.6 192.3V193.9Z"/><path d="M220.8 194V192.4A1.3 1.3 0 0 1 223.5 192.4V194Z"/><path d="M201.5 194.2V192.6A1.3 1.3 0 0 1 204.1 192.6V194.2Z"/><path d="M179.7 194.3V192.7A1.3 1.3 0 0 1 182.4 192.7V194.3Z"/><path d="M267.1 194.5V192.9A1.3 1.3 0 0 1 269.8 192.9V194.5Z"/><path d="M224.4 194.6V192.9A1.3 1.3 0 0 1 227.1 192.9V194.6Z"/><path d="M305 194.6V193A1.3 1.3 0 0 1 307.6 193V194.6Z"/><path d="M178 194.7V193.1A1.3 1.3 0 0 1 180.7 193.1V194.7Z"/><path d="M242.8 194.7V193.1A1.3 1.3 0 0 1 245.5 193.1V194.7Z"/><path d="M172.2 194.8V193.2A1.3 1.3 0 0 1 174.9 193.2V194.8Z"/><path d="M170.6 194.9V193.3A1.3 1.3 0 0 1 173.2 193.3V194.9Z"/><path d="M193.3 195V193.3A1.3 1.3 0 0 1 196 193.3V195Z"/><path d="M299.1 195V193.3A1.3 1.3 0 0 1 301.7 193.3V195Z"/><path d="M169 195.1V193.5A1.3 1.3 0 0 1 171.7 193.5V195.1Z"/><path d="M159.6 195.3V193.7A1.3 1.3 0 0 1 162.3 193.7V195.3Z"/><path d="M163.4 195.3V193.7A1.3 1.3 0 0 1 166 193.7V195.3Z"/><path d="M263.2 195.5V193.9A1.3 1.3 0 0 1 265.9 193.9V195.5Z"/><path d="M166.5 195.7V194.1A1.3 1.3 0 0 1 169.2 194.1V195.7Z"/><path d="M205.2 195.7V194.1A1.3 1.3 0 0 1 207.9 194.1V195.7Z"/><path d="M256.8 195.8V194.2A1.3 1.3 0 0 1 259.5 194.2V195.8Z"/><path d="M207.4 195.9V194.2A1.3 1.3 0 0 1 210.1 194.2V195.9Z"/><path d="M306 195.9V194.3A1.3 1.3 0 0 1 308.7 194.3V195.9Z"/><path d="M276.2 195.9V194.3A1.3 1.3 0 0 1 278.9 194.3V195.9Z"/><path d="M280.3 195.9V194.3A1.3 1.3 0 0 1 283 194.3V195.9Z"/><path d="M248.8 196.1V194.5A1.3 1.3 0 0 1 251.5 194.5V196.1Z"/><path d="M178.6 196.2V194.5A1.3 1.3 0 0 1 181.3 194.5V196.2Z"/><path d="M290.6 196.2V194.6A1.3 1.3 0 0 1 293.3 194.6V196.2Z"/><path d="M173.9 196.2V194.6A1.3 1.3 0 0 1 176.6 194.6V196.2Z"/><path d="M245.9 196.4V194.8A1.3 1.3 0 0 1 248.6 194.8V196.4Z"/><path d="M278.3 196.5V194.9A1.3 1.3 0 0 1 281 194.9V196.5Z"/><path d="M277.4 196.6V195A1.3 1.3 0 0 1 280.1 195V196.6Z"/><path d="M250.1 196.6V195A1.3 1.3 0 0 1 252.8 195V196.6Z"/><path d="M166.8 196.7V195.1A1.3 1.3 0 0 1 169.5 195.1V196.7Z"/><path d="M251 196.7V195.1A1.3 1.3 0 0 1 253.7 195.1V196.7Z"/><path d="M202.7 196.7V195.1A1.3 1.3 0 0 1 205.3 195.1V196.7Z"/><path d="M295 196.8V195.1A1.3 1.3 0 0 1 297.7 195.1V196.8Z"/><path d="M208.1 196.8V195.2A1.3 1.3 0 0 1 210.7 195.2V196.8Z"/><path d="M145.1 196.9V195.3A1.3 1.3 0 0 1 147.8 195.3V196.9Z"/><path d="M148.7 197V195.4A1.3 1.3 0 0 1 151.4 195.4V197Z"/><path d="M198.6 197.4V195.8A1.3 1.3 0 0 1 201.3 195.8V197.4Z"/><path d="M166.2 197.5V195.9A1.3 1.3 0 0 1 168.9 195.9V197.5Z"/><path d="M222.9 197.6V195.9A1.3 1.3 0 0 1 225.6 195.9V197.6Z"/><path d="M314.6 197.6V196A1.3 1.3 0 0 1 317.3 196V197.6Z"/><path d="M187.3 197.7V196A1.3 1.3 0 0 1 190 196V197.7Z"/><path d="M148.1 197.7V196.1A1.3 1.3 0 0 1 150.8 196.1V197.7Z"/><path d="M248.3 197.7V196.1A1.3 1.3 0 0 1 251 196.1V197.7Z"/><path d="M221.6 197.9V196.2A1.3 1.3 0 0 1 224.3 196.2V197.9Z"/><path d="M268.6 197.9V196.3A1.4 1.4 0 0 1 271.3 196.3V197.9Z"/><path d="M292.7 197.9V196.3A1.4 1.4 0 0 1 295.4 196.3V197.9Z"/><path d="M195.6 197.9V196.3A1.4 1.4 0 0 1 198.3 196.3V197.9Z"/><path d="M201.8 198V196.4A1.4 1.4 0 0 1 204.5 196.4V198Z"/><path d="M169.2 198.1V196.4A1.4 1.4 0 0 1 171.9 196.4V198.1Z"/><path d="M217.3 198.2V196.5A1.4 1.4 0 0 1 220 196.5V198.2Z"/><path d="M150.6 198.4V196.8A1.4 1.4 0 0 1 153.3 196.8V198.4Z"/><path d="M314.4 198.4V196.8A1.4 1.4 0 0 1 317.1 196.8V198.4Z"/><path d="M139.9 198.6V197A1.4 1.4 0 0 1 142.6 197V198.6Z"/><path d="M244.9 198.7V197A1.4 1.4 0 0 1 247.6 197V198.7Z"/><path d="M278.8 198.7V197.1A1.4 1.4 0 0 1 281.5 197.1V198.7Z"/><path d="M172.6 198.8V197.1A1.4 1.4 0 0 1 175.3 197.1V198.8Z"/><path d="M252.7 198.8V197.2A1.4 1.4 0 0 1 255.4 197.2V198.8Z"/><path d="M163.7 198.9V197.3A1.4 1.4 0 0 1 166.4 197.3V198.9Z"/><path d="M279 198.9V197.3A1.4 1.4 0 0 1 281.7 197.3V198.9Z"/><path d="M151.2 199V197.3A1.4 1.4 0 0 1 153.9 197.3V199Z"/><path d="M234.9 199V197.4A1.4 1.4 0 0 1 237.7 197.4V199Z"/><path d="M134.6 199.1V197.4A1.4 1.4 0 0 1 137.3 197.4V199.1Z"/><path d="M280.1 199.1V197.4A1.4 1.4 0 0 1 282.8 197.4V199.1Z"/><path d="M313.5 199.1V197.5A1.4 1.4 0 0 1 316.3 197.5V199.1Z"/><path d="M280 199.2V197.6A1.4 1.4 0 0 1 282.7 197.6V199.2Z"/><path d="M148.1 199.2V197.6A1.4 1.4 0 0 1 150.8 197.6V199.2Z"/><path d="M293.6 199.5V197.8A1.4 1.4 0 0 1 296.3 197.8V199.5Z"/><path d="M207 199.5V197.9A1.4 1.4 0 0 1 209.7 197.9V199.5Z"/><path d="M175 199.5V197.9A1.4 1.4 0 0 1 177.8 197.9V199.5Z"/><path d="M140.6 199.5V197.9A1.4 1.4 0 0 1 143.3 197.9V199.5Z"/><path d="M263.6 199.5V197.9A1.4 1.4 0 0 1 266.3 197.9V199.5Z"/><path d="M160 199.5V197.9A1.4 1.4 0 0 1 162.7 197.9V199.5Z"/><path d="M176.9 199.6V197.9A1.4 1.4 0 0 1 179.6 197.9V199.6Z"/><path d="M220.7 199.6V197.9A1.4 1.4 0 0 1 223.4 197.9V199.6Z"/><path d="M282.7 199.6V198A1.4 1.4 0 0 1 285.4 198V199.6Z"/><path d="M297.5 199.7V198A1.4 1.4 0 0 1 300.2 198V199.7Z"/><path d="M236.9 199.9V198.3A1.4 1.4 0 0 1 239.6 198.3V199.9Z"/><path d="M257.9 200.1V198.5A1.4 1.4 0 0 1 260.7 198.5V200.1Z"/><path d="M279.7 200.1V198.5A1.4 1.4 0 0 1 282.4 198.5V200.1Z"/><path d="M195.4 200.2V198.5A1.4 1.4 0 0 1 198.1 198.5V200.2Z"/><path d="M156 200.3V198.6A1.4 1.4 0 0 1 158.7 198.6V200.3Z"/><path d="M212.4 200.4V198.8A1.4 1.4 0 0 1 215.1 198.8V200.4Z"/><path d="M175.1 200.5V198.8A1.4 1.4 0 0 1 177.8 198.8V200.5Z"/><path d="M170.6 200.5V198.9A1.4 1.4 0 0 1 173.3 198.9V200.5Z"/><path d="M312.2 200.6V199A1.4 1.4 0 0 1 314.9 199V200.6Z"/><path d="M226 200.8V199.1A1.4 1.4 0 0 1 228.7 199.1V200.8Z"/><path d="M245.6 200.9V199.3A1.4 1.4 0 0 1 248.4 199.3V200.9Z"/><path d="M213.1 200.9V199.3A1.4 1.4 0 0 1 215.8 199.3V200.9Z"/><path d="M234.3 201V199.3A1.4 1.4 0 0 1 237 199.3V201Z"/><path d="M309.2 201.1V199.5A1.4 1.4 0 0 1 311.9 199.5V201.1Z"/><path d="M160.2 201.2V199.5A1.4 1.4 0 0 1 162.9 199.5V201.2Z"/><path d="M317.5 201.2V199.6A1.4 1.4 0 0 1 320.2 199.6V201.2Z"/><path d="M241.1 201.6V199.9A1.4 1.4 0 0 1 243.8 199.9V201.6Z"/><path d="M152.6 201.6V200A1.4 1.4 0 0 1 155.4 200V201.6Z"/><path d="M234.4 201.8V200.2A1.4 1.4 0 0 1 237.1 200.2V201.8Z"/><path d="M146.4 201.9V200.2A1.4 1.4 0 0 1 149.1 200.2V201.9Z"/><path d="M151.2 201.9V200.3A1.4 1.4 0 0 1 153.9 200.3V201.9Z"/><path d="M212.3 201.9V200.3A1.4 1.4 0 0 1 215 200.3V201.9Z"/><path d="M244.3 202.1V200.4A1.4 1.4 0 0 1 247 200.4V202.1Z"/><path d="M327.4 202.2V200.5A1.4 1.4 0 0 1 330.1 200.5V202.2Z"/><path d="M200.3 202.2V200.6A1.4 1.4 0 0 1 203.1 200.6V202.2Z"/><path d="M199.6 202.3V200.6A1.4 1.4 0 0 1 202.4 200.6V202.3Z"/><path d="M306.8 202.3V200.7A1.4 1.4 0 0 1 309.5 200.7V202.3Z"/><path d="M137.4 202.3V200.7A1.4 1.4 0 0 1 140.1 200.7V202.3Z"/><path d="M158.5 202.4V200.7A1.4 1.4 0 0 1 161.3 200.7V202.4Z"/><path d="M194.7 202.4V200.8A1.4 1.4 0 0 1 197.4 200.8V202.4Z"/><path d="M309.5 202.5V200.8A1.4 1.4 0 0 1 312.3 200.8V202.5Z"/><path d="M135.5 202.6V200.9A1.4 1.4 0 0 1 138.3 200.9V202.6Z"/><path d="M291.2 202.7V201.1A1.4 1.4 0 0 1 294 201.1V202.7Z"/><path d="M203 202.7V201.1A1.4 1.4 0 0 1 205.8 201.1V202.7Z"/><path d="M166.3 202.8V201.1A1.4 1.4 0 0 1 169.1 201.1V202.8Z"/><path d="M204.5 202.8V201.2A1.4 1.4 0 0 1 207.3 201.2V202.8Z"/><path d="M237.4 202.9V201.2A1.4 1.4 0 0 1 240.2 201.2V202.9Z"/><path d="M313.7 202.9V201.2A1.4 1.4 0 0 1 316.4 201.2V202.9Z"/><path d="M311.6 203V201.3A1.4 1.4 0 0 1 314.3 201.3V203Z"/><path d="M267.7 203.2V201.6A1.4 1.4 0 0 1 270.4 201.6V203.2Z"/><path d="M328 203.3V201.7A1.4 1.4 0 0 1 330.8 201.7V203.3Z"/><path d="M324.7 203.4V201.7A1.4 1.4 0 0 1 327.5 201.7V203.4Z"/><path d="M257.6 203.6V201.9A1.4 1.4 0 0 1 260.4 201.9V203.6Z"/><path d="M266.3 203.6V202A1.4 1.4 0 0 1 269 202V203.6Z"/><path d="M299.6 203.7V202A1.4 1.4 0 0 1 302.4 202V203.7Z"/><path d="M164.9 203.7V202.1A1.4 1.4 0 0 1 167.7 202.1V203.7Z"/><path d="M142 203.7V202.1A1.4 1.4 0 0 1 144.8 202.1V203.7Z"/><path d="M150.3 203.8V202.2A1.4 1.4 0 0 1 153.1 202.2V203.8Z"/><path d="M239 203.8V202.2A1.4 1.4 0 0 1 241.7 202.2V203.8Z"/><path d="M213.2 203.8V202.2A1.4 1.4 0 0 1 215.9 202.2V203.8Z"/><path d="M282.4 204V202.4A1.4 1.4 0 0 1 285.2 202.4V204Z"/><path d="M255.5 204.1V202.5A1.4 1.4 0 0 1 258.3 202.5V204.1Z"/><path d="M294.2 204.1V202.5A1.4 1.4 0 0 1 296.9 202.5V204.1Z"/><path d="M260.2 204.2V202.5A1.4 1.4 0 0 1 263 202.5V204.2Z"/><path d="M221.1 204.2V202.5A1.4 1.4 0 0 1 223.8 202.5V204.2Z"/><path d="M302.4 204.2V202.5A1.4 1.4 0 0 1 305.2 202.5V204.2Z"/><path d="M196.6 204.5V202.8A1.4 1.4 0 0 1 199.3 202.8V204.5Z"/><path d="M211.9 204.6V202.9A1.4 1.4 0 0 1 214.6 202.9V204.6Z"/><path d="M260.2 204.8V203.1A1.4 1.4 0 0 1 263 203.1V204.8Z"/><path d="M284.4 204.8V203.2A1.4 1.4 0 0 1 287.1 203.2V204.8Z"/><path d="M284.6 205V203.3A1.4 1.4 0 0 1 287.3 203.3V205Z"/><path d="M202.1 205V203.3A1.4 1.4 0 0 1 204.8 203.3V205Z"/><path d="M165.2 205V203.3A1.4 1.4 0 0 1 168 203.3V205Z"/><path d="M169.6 205.1V203.5A1.4 1.4 0 0 1 172.4 203.5V205.1Z"/><path d="M302 205.1V203.5A1.4 1.4 0 0 1 304.8 203.5V205.1Z"/><path d="M243.8 205.4V203.8A1.4 1.4 0 0 1 246.6 203.8V205.4Z"/><path d="M149 205.7V204A1.4 1.4 0 0 1 151.7 204V205.7Z"/><path d="M261.3 205.8V204.2A1.4 1.4 0 0 1 264 204.2V205.8Z"/><path d="M280.7 205.9V204.2A1.4 1.4 0 0 1 283.5 204.2V205.9Z"/><path d="M250.4 205.9V204.2A1.4 1.4 0 0 1 253.2 204.2V205.9Z"/><path d="M220.4 205.9V204.2A1.4 1.4 0 0 1 223.2 204.2V205.9Z"/><path d="M187.7 206.1V204.4A1.4 1.4 0 0 1 190.5 204.4V206.1Z"/><path d="M330.2 206.2V204.5A1.4 1.4 0 0 1 333 204.5V206.2Z"/><path d="M215.9 206.2V204.6A1.4 1.4 0 0 1 218.7 204.6V206.2Z"/><path d="M148.3 206.3V204.7A1.4 1.4 0 0 1 151.1 204.7V206.3Z"/><path d="M261.3 206.5V204.8A1.4 1.4 0 0 1 264.1 204.8V206.5Z"/><path d="M140.3 206.6V204.9A1.4 1.4 0 0 1 143.1 204.9V206.6Z"/><path d="M258.9 206.6V205A1.4 1.4 0 0 1 261.6 205V206.6Z"/><path d="M290.6 206.7V205A1.4 1.4 0 0 1 293.4 205V206.7Z"/><path d="M156.7 206.7V205.1A1.4 1.4 0 0 1 159.5 205.1V206.7Z"/><path d="M170.1 206.8V205.2A1.4 1.4 0 0 1 172.9 205.2V206.8Z"/><path d="M176.2 206.8V205.2A1.4 1.4 0 0 1 179 205.2V206.8Z"/><path d="M325.4 206.9V205.3A1.4 1.4 0 0 1 328.2 205.3V206.9Z"/><path d="M226.5 207V205.3A1.4 1.4 0 0 1 229.3 205.3V207Z"/><path d="M279.2 207V205.3A1.4 1.4 0 0 1 282 205.3V207Z"/><path d="M210.8 207V205.3A1.4 1.4 0 0 1 213.6 205.3V207Z"/><path d="M152.2 207.3V205.6A1.4 1.4 0 0 1 155 205.6V207.3Z"/><path d="M215.7 207.4V205.8A1.4 1.4 0 0 1 218.5 205.8V207.4Z"/><path d="M282.4 207.5V205.8A1.4 1.4 0 0 1 285.2 205.8V207.5Z"/><path d="M153.5 207.5V205.8A1.4 1.4 0 0 1 156.3 205.8V207.5Z"/><path d="M277.5 207.6V205.9A1.4 1.4 0 0 1 280.3 205.9V207.6Z"/><path d="M220.6 207.6V205.9A1.4 1.4 0 0 1 223.3 205.9V207.6Z"/><path d="M154.2 207.9V206.2A1.4 1.4 0 0 1 157 206.2V207.9Z"/><path d="M227.6 207.9V206.2A1.4 1.4 0 0 1 230.3 206.2V207.9Z"/><path d="M157.6 207.9V206.2A1.4 1.4 0 0 1 160.4 206.2V207.9Z"/><path d="M302 208.1V206.4A1.4 1.4 0 0 1 304.8 206.4V208.1Z"/><path d="M146.5 208.2V206.5A1.4 1.4 0 0 1 149.3 206.5V208.2Z"/><path d="M169.3 208.2V206.5A1.4 1.4 0 0 1 172.1 206.5V208.2Z"/><path d="M242.9 208.2V206.5A1.4 1.4 0 0 1 245.7 206.5V208.2Z"/><path d="M184.9 208.2V206.6A1.4 1.4 0 0 1 187.7 206.6V208.2Z"/><path d="M200.2 208.3V206.6A1.4 1.4 0 0 1 203 206.6V208.3Z"/><path d="M257.8 208.3V206.7A1.4 1.4 0 0 1 260.5 206.7V208.3Z"/><path d="M170.7 208.4V206.7A1.4 1.4 0 0 1 173.5 206.7V208.4Z"/><path d="M315 208.5V206.8A1.4 1.4 0 0 1 317.7 206.8V208.5Z"/><path d="M328.7 208.7V207A1.4 1.4 0 0 1 331.5 207V208.7Z"/><path d="M303 208.7V207A1.4 1.4 0 0 1 305.8 207V208.7Z"/><path d="M245.9 208.7V207.1A1.4 1.4 0 0 1 248.7 207.1V208.7Z"/><path d="M318.2 208.9V207.2A1.4 1.4 0 0 1 321 207.2V208.9Z"/><path d="M163.3 208.9V207.2A1.4 1.4 0 0 1 166.1 207.2V208.9Z"/><path d="M209.1 208.9V207.2A1.4 1.4 0 0 1 211.9 207.2V208.9Z"/><path d="M194.1 208.9V207.2A1.4 1.4 0 0 1 196.9 207.2V208.9Z"/><path d="M269.1 209V207.3A1.4 1.4 0 0 1 271.9 207.3V209Z"/><path d="M159.5 209.1V207.4A1.4 1.4 0 0 1 162.3 207.4V209.1Z"/><path d="M162.9 209.1V207.4A1.4 1.4 0 0 1 165.7 207.4V209.1Z"/><path d="M295 209.2V207.5A1.4 1.4 0 0 1 297.8 207.5V209.2Z"/><path d="M333.1 209.3V207.6A1.4 1.4 0 0 1 335.9 207.6V209.3Z"/><path d="M330.1 209.3V207.6A1.4 1.4 0 0 1 332.9 207.6V209.3Z"/><path d="M297.2 209.5V207.8A1.4 1.4 0 0 1 299.9 207.8V209.5Z"/><path d="M190.3 209.8V208.1A1.4 1.4 0 0 1 193.1 208.1V209.8Z"/><path d="M335.8 209.8V208.2A1.4 1.4 0 0 1 338.6 208.2V209.8Z"/><path d="M257.3 209.8V208.2A1.4 1.4 0 0 1 260.1 208.2V209.8Z"/><path d="M239.3 209.9V208.2A1.4 1.4 0 0 1 242.1 208.2V209.9Z"/><path d="M243.4 210.1V208.4A1.4 1.4 0 0 1 246.2 208.4V210.1Z"/><path d="M296.8 210.2V208.6A1.4 1.4 0 0 1 299.6 208.6V210.2Z"/><path d="M267.5 210.3V208.7A1.4 1.4 0 0 1 270.3 208.7V210.3Z"/><path d="M283.5 210.4V208.7A1.4 1.4 0 0 1 286.3 208.7V210.4Z"/><path d="M180.3 210.4V208.7A1.4 1.4 0 0 1 183.1 208.7V210.4Z"/><path d="M228.6 210.5V208.8A1.4 1.4 0 0 1 231.4 208.8V210.5Z"/><path d="M283.6 210.6V208.9A1.4 1.4 0 0 1 286.4 208.9V210.6Z"/><path d="M153.9 210.7V209A1.4 1.4 0 0 1 156.7 209V210.7Z"/><path d="M321.8 210.7V209.1A1.4 1.4 0 0 1 324.6 209.1V210.7Z"/><path d="M174.1 210.8V209.1A1.4 1.4 0 0 1 176.9 209.1V210.8Z"/><path d="M335.8 210.9V209.2A1.4 1.4 0 0 1 338.6 209.2V210.9Z"/><path d="M204.8 210.9V209.2A1.4 1.4 0 0 1 207.6 209.2V210.9Z"/><path d="M156.9 210.9V209.2A1.4 1.4 0 0 1 159.6 209.2V210.9Z"/><path d="M153.9 210.9V209.3A1.4 1.4 0 0 1 156.7 209.3V210.9Z"/><path d="M179.3 211V209.4A1.4 1.4 0 0 1 182.1 209.4V211Z"/><path d="M147 211.1V209.4A1.4 1.4 0 0 1 149.8 209.4V211.1Z"/><path d="M196.7 211.2V209.5A1.4 1.4 0 0 1 199.5 209.5V211.2Z"/><path d="M208 211.2V209.5A1.4 1.4 0 0 1 210.8 209.5V211.2Z"/><path d="M305 211.3V209.6A1.4 1.4 0 0 1 307.8 209.6V211.3Z"/><path d="M147.5 211.4V209.7A1.4 1.4 0 0 1 150.3 209.7V211.4Z"/><path d="M190.4 211.4V209.7A1.4 1.4 0 0 1 193.2 209.7V211.4Z"/><path d="M265.5 211.5V209.8A1.4 1.4 0 0 1 268.3 209.8V211.5Z"/><path d="M178.5 211.5V209.8A1.4 1.4 0 0 1 181.3 209.8V211.5Z"/><path d="M241.2 211.6V209.9A1.4 1.4 0 0 1 244 209.9V211.6Z"/><path d="M342.6 211.6V209.9A1.4 1.4 0 0 1 345.5 209.9V211.6Z"/><path d="M234.2 211.6V209.9A1.4 1.4 0 0 1 237 209.9V211.6Z"/><path d="M164.2 211.7V210A1.4 1.4 0 0 1 167 210V211.7Z"/><path d="M314.8 211.8V210.1A1.4 1.4 0 0 1 317.6 210.1V211.8Z"/><path d="M182.8 211.9V210.2A1.4 1.4 0 0 1 185.7 210.2V211.9Z"/><path d="M327.3 211.9V210.2A1.4 1.4 0 0 1 330.1 210.2V211.9Z"/><path d="M313.5 211.9V210.2A1.4 1.4 0 0 1 316.3 210.2V211.9Z"/><path d="M258.8 212V210.3A1.4 1.4 0 0 1 261.6 210.3V212Z"/><path d="M180.6 212.1V210.4A1.4 1.4 0 0 1 183.5 210.4V212.1Z"/><path d="M216.7 212.2V210.5A1.4 1.4 0 0 1 219.5 210.5V212.2Z"/><path d="M211.9 212.4V210.7A1.4 1.4 0 0 1 214.7 210.7V212.4Z"/><path d="M313.8 212.4V210.7A1.4 1.4 0 0 1 316.6 210.7V212.4Z"/><path d="M249.2 212.4V210.7A1.4 1.4 0 0 1 252.1 210.7V212.4Z"/><path d="M250.3 212.5V210.8A1.4 1.4 0 0 1 253.2 210.8V212.5Z"/><path d="M293.6 212.7V211A1.4 1.4 0 0 1 296.4 211V212.7Z"/><path d="M187.7 212.8V211.1A1.4 1.4 0 0 1 190.5 211.1V212.8Z"/><path d="M223.8 212.9V211.2A1.4 1.4 0 0 1 226.6 211.2V212.9Z"/><path d="M193.3 212.9V211.2A1.4 1.4 0 0 1 196.1 211.2V212.9Z"/><path d="M188.5 212.9V211.2A1.4 1.4 0 0 1 191.3 211.2V212.9Z"/><path d="M174.3 212.9V211.2A1.4 1.4 0 0 1 177.1 211.2V212.9Z"/><path d="M295.5 212.9V211.2A1.4 1.4 0 0 1 298.4 211.2V212.9Z"/><path d="M313.3 213V211.3A1.4 1.4 0 0 1 316.1 211.3V213Z"/><path d="M205.5 213.2V211.5A1.4 1.4 0 0 1 208.3 211.5V213.2Z"/><path d="M292.4 213.3V211.6A1.4 1.4 0 0 1 295.2 211.6V213.3Z"/><path d="M165.4 213.4V211.7A1.4 1.4 0 0 1 168.2 211.7V213.4Z"/><path d="M234.7 213.5V211.8A1.4 1.4 0 0 1 237.6 211.8V213.5Z"/><path d="M250.4 213.5V211.8A1.4 1.4 0 0 1 253.2 211.8V213.5Z"/><path d="M307.8 213.5V211.8A1.4 1.4 0 0 1 310.6 211.8V213.5Z"/><path d="M332.5 213.6V211.9A1.4 1.4 0 0 1 335.3 211.9V213.6Z"/><path d="M202.3 213.7V212A1.4 1.4 0 0 1 205.1 212V213.7Z"/><path d="M314.6 213.7V212A1.4 1.4 0 0 1 317.4 212V213.7Z"/><path d="M227.4 213.9V212.2A1.4 1.4 0 0 1 230.2 212.2V213.9Z"/><path d="M253.9 214.1V212.4A1.4 1.4 0 0 1 256.7 212.4V214.1Z"/><path d="M324.6 214.2V212.5A1.4 1.4 0 0 1 327.5 212.5V214.2Z"/><path d="M330.9 214.3V212.6A1.4 1.4 0 0 1 333.8 212.6V214.3Z"/><path d="M221.4 214.4V212.7A1.4 1.4 0 0 1 224.3 212.7V214.4Z"/><path d="M328.9 214.5V212.8A1.4 1.4 0 0 1 331.7 212.8V214.5Z"/><path d="M343.8 214.6V212.9A1.4 1.4 0 0 1 346.6 212.9V214.6Z"/><path d="M152 214.8V213.1A1.4 1.4 0 0 1 154.8 213.1V214.8Z"/><path d="M163 214.8V213.1A1.4 1.4 0 0 1 165.8 213.1V214.8Z"/><path d="M159.6 215.1V213.4A1.4 1.4 0 0 1 162.4 213.4V215.1Z"/><path d="M238.1 215.2V213.4A1.4 1.4 0 0 1 240.9 213.4V215.2Z"/><path d="M307.8 215.3V213.6A1.4 1.4 0 0 1 310.6 213.6V215.3Z"/><path d="M160 215.4V213.7A1.4 1.4 0 0 1 162.8 213.7V215.4Z"/><path d="M162.3 215.5V213.8A1.4 1.4 0 0 1 165.1 213.8V215.5Z"/><path d="M322 215.5V213.8A1.4 1.4 0 0 1 324.9 213.8V215.5Z"/><path d="M164.3 215.7V214A1.4 1.4 0 0 1 167.2 214V215.7Z"/><path d="M205 215.8V214.1A1.4 1.4 0 0 1 207.8 214.1V215.8Z"/><path d="M338.5 215.8V214.1A1.4 1.4 0 0 1 341.3 214.1V215.8Z"/><path d="M193.7 216.1V214.4A1.4 1.4 0 0 1 196.5 214.4V216.1Z"/><path d="M319.8 216.2V214.5A1.4 1.4 0 0 1 322.7 214.5V216.2Z"/><path d="M338.1 216.3V214.6A1.4 1.4 0 0 1 341 214.6V216.3Z"/><path d="M227.2 216.5V214.8A1.4 1.4 0 0 1 230.1 214.8V216.5Z"/><path d="M260.2 216.7V215A1.4 1.4 0 0 1 263 215V216.7Z"/><path d="M185.7 217.1V215.3A1.4 1.4 0 0 1 188.6 215.3V217.1Z"/><path d="M276.1 217.1V215.4A1.4 1.4 0 0 1 279 215.4V217.1Z"/><path d="M330.5 217.2V215.5A1.4 1.4 0 0 1 333.4 215.5V217.2Z"/><path d="M226.5 217.3V215.6A1.4 1.4 0 0 1 229.3 215.6V217.3Z"/><path d="M191.7 217.5V215.8A1.4 1.4 0 0 1 194.6 215.8V217.5Z"/><path d="M339.6 217.5V215.8A1.4 1.4 0 0 1 342.5 215.8V217.5Z"/><path d="M169.5 217.6V215.9A1.4 1.4 0 0 1 172.4 215.9V217.6Z"/><path d="M252.1 217.6V215.9A1.4 1.4 0 0 1 254.9 215.9V217.6Z"/><path d="M195.4 217.7V215.9A1.4 1.4 0 0 1 198.2 215.9V217.7Z"/><path d="M332.7 217.8V216.1A1.4 1.4 0 0 1 335.6 216.1V217.8Z"/><path d="M198.5 218V216.2A1.4 1.4 0 0 1 201.3 216.2V218Z"/><path d="M218 218.1V216.4A1.4 1.4 0 0 1 220.9 216.4V218.1Z"/><path d="M180.7 218.2V216.5A1.4 1.4 0 0 1 183.5 216.5V218.2Z"/><path d="M298.6 218.3V216.6A1.4 1.4 0 0 1 301.5 216.6V218.3Z"/><path d="M297.4 218.3V216.6A1.4 1.4 0 0 1 300.3 216.6V218.3Z"/><path d="M311 218.3V216.6A1.4 1.4 0 0 1 313.9 216.6V218.3Z"/><path d="M354.3 218.4V216.7A1.4 1.4 0 0 1 357.2 216.7V218.4Z"/><path d="M309.2 218.4V216.7A1.4 1.4 0 0 1 312 216.7V218.4Z"/><path d="M157.2 218.4V216.7A1.4 1.4 0 0 1 160 216.7V218.4Z"/><path d="M189.8 218.5V216.8A1.4 1.4 0 0 1 192.7 216.8V218.5Z"/><path d="M318.1 218.6V216.9A1.4 1.4 0 0 1 321 216.9V218.6Z"/><path d="M157.5 218.9V217.2A1.4 1.4 0 0 1 160.3 217.2V218.9Z"/><path d="M277.1 219.3V217.5A1.4 1.4 0 0 1 280 217.5V219.3Z"/><path d="M361.6 219.4V217.7A1.4 1.4 0 0 1 364.4 217.7V219.4Z"/><path d="M221.8 219.4V217.7A1.4 1.4 0 0 1 224.7 217.7V219.4Z"/><path d="M285.4 219.5V217.7A1.4 1.4 0 0 1 288.2 217.7V219.5Z"/><path d="M244.3 219.5V217.8A1.4 1.4 0 0 1 247.2 217.8V219.5Z"/><path d="M310.4 219.6V217.9A1.4 1.4 0 0 1 313.3 217.9V219.6Z"/><path d="M212.6 219.8V218.1A1.4 1.4 0 0 1 215.5 218.1V219.8Z"/><path d="M244.5 219.9V218.2A1.4 1.4 0 0 1 247.4 218.2V219.9Z"/><path d="M326.8 220V218.2A1.4 1.4 0 0 1 329.7 218.2V220Z"/><path d="M167 220.1V218.3A1.4 1.4 0 0 1 169.8 218.3V220.1Z"/><path d="M276.7 220.1V218.3A1.4 1.4 0 0 1 279.6 218.3V220.1Z"/><path d="M326.4 220.1V218.4A1.4 1.4 0 0 1 329.3 218.4V220.1Z"/><path d="M254.6 220.1V218.4A1.4 1.4 0 0 1 257.5 218.4V220.1Z"/><path d="M254.9 220.1V218.4A1.4 1.4 0 0 1 257.7 218.4V220.1Z"/><path d="M284.7 220.4V218.7A1.4 1.4 0 0 1 287.6 218.7V220.4Z"/><path d="M235.3 220.4V218.7A1.4 1.4 0 0 1 238.2 218.7V220.4Z"/><path d="M349.1 220.5V218.7A1.4 1.4 0 0 1 352 218.7V220.5Z"/><path d="M227.8 220.7V219A1.4 1.4 0 0 1 230.7 219V220.7Z"/><path d="M311.9 220.8V219.1A1.4 1.4 0 0 1 314.8 219.1V220.8Z"/><path d="M238.4 220.8V219.1A1.4 1.4 0 0 1 241.3 219.1V220.8Z"/><path d="M172.9 221.2V219.5A1.4 1.4 0 0 1 175.8 219.5V221.2Z"/><path d="M310.8 221.2V219.5A1.4 1.4 0 0 1 313.7 219.5V221.2Z"/><path d="M161.2 221.3V219.6A1.4 1.4 0 0 1 164 219.6V221.3Z"/><path d="M198.2 221.3V219.6A1.4 1.4 0 0 1 201 219.6V221.3Z"/><path d="M263.9 221.3V219.6A1.4 1.4 0 0 1 266.7 219.6V221.3Z"/><path d="M285.6 221.4V219.6A1.4 1.4 0 0 1 288.5 219.6V221.4Z"/><path d="M254.6 221.4V219.6A1.4 1.4 0 0 1 257.5 219.6V221.4Z"/><path d="M266.1 221.4V219.7A1.4 1.4 0 0 1 269 219.7V221.4Z"/><path d="M167.4 221.4V219.7A1.4 1.4 0 0 1 170.3 219.7V221.4Z"/><path d="M357.1 221.5V219.8A1.4 1.4 0 0 1 360 219.8V221.5Z"/><path d="M255.6 221.6V219.8A1.4 1.4 0 0 1 258.5 219.8V221.6Z"/><path d="M264.2 221.7V219.9A1.4 1.4 0 0 1 267 219.9V221.7Z"/><path d="M352.3 221.7V219.9A1.4 1.4 0 0 1 355.2 219.9V221.7Z"/><path d="M321.6 221.9V220.1A1.4 1.4 0 0 1 324.5 220.1V221.9Z"/><path d="M332.3 222.2V220.5A1.4 1.4 0 0 1 335.2 220.5V222.2Z"/><path d="M237.6 222.2V220.5A1.4 1.4 0 0 1 240.4 220.5V222.2Z"/><path d="M248.9 222.3V220.5A1.4 1.4 0 0 1 251.8 220.5V222.3Z"/><path d="M308.1 222.3V220.5A1.4 1.4 0 0 1 311 220.5V222.3Z"/><path d="M202.4 222.3V220.6A1.4 1.4 0 0 1 205.3 220.6V222.3Z"/><path d="M313.5 222.6V220.8A1.4 1.4 0 0 1 316.4 220.8V222.6Z"/><path d="M291 222.6V220.9A1.4 1.4 0 0 1 293.9 220.9V222.6Z"/><path d="M300.1 222.7V221A1.4 1.4 0 0 1 303 221V222.7Z"/><path d="M239 222.9V221.2A1.4 1.4 0 0 1 241.9 221.2V222.9Z"/><path d="M227.9 223V221.3A1.4 1.4 0 0 1 230.7 221.3V223Z"/><path d="M256.5 223.1V221.3A1.4 1.4 0 0 1 259.4 221.3V223.1Z"/><path d="M206.9 223.1V221.4A1.4 1.4 0 0 1 209.8 221.4V223.1Z"/><path d="M238.3 223.3V221.5A1.4 1.4 0 0 1 241.2 221.5V223.3Z"/><path d="M294.1 223.3V221.6A1.4 1.4 0 0 1 297 221.6V223.3Z"/><path d="M278.5 223.4V221.6A1.4 1.4 0 0 1 281.3 221.6V223.4Z"/><path d="M225.4 223.4V221.7A1.4 1.4 0 0 1 228.3 221.7V223.4Z"/><path d="M245.3 223.5V221.7A1.4 1.4 0 0 1 248.2 221.7V223.5Z"/><path d="M290.3 223.5V221.7A1.4 1.4 0 0 1 293.2 221.7V223.5Z"/><path d="M178.9 223.5V221.8A1.4 1.4 0 0 1 181.8 221.8V223.5Z"/><path d="M216.8 223.7V222A1.4 1.4 0 0 1 219.7 222V223.7Z"/><path d="M296.9 223.9V222.1A1.4 1.4 0 0 1 299.8 222.1V223.9Z"/><path d="M181.9 223.9V222.2A1.4 1.4 0 0 1 184.8 222.2V223.9Z"/><path d="M319.4 223.9V222.2A1.5 1.5 0 0 1 322.3 222.2V223.9Z"/><path d="M166.2 224.5V222.7A1.5 1.5 0 0 1 169.1 222.7V224.5Z"/><path d="M267.5 224.6V222.8A1.5 1.5 0 0 1 270.4 222.8V224.6Z"/><path d="M299.1 224.6V222.8A1.5 1.5 0 0 1 302 222.8V224.6Z"/><path d="M173.7 224.7V223A1.5 1.5 0 0 1 176.6 223V224.7Z"/><path d="M230.2 224.7V223A1.5 1.5 0 0 1 233.1 223V224.7Z"/><path d="M206.9 224.7V223A1.5 1.5 0 0 1 209.8 223V224.7Z"/><path d="M258 224.8V223.1A1.5 1.5 0 0 1 261 223.1V224.8Z"/><path d="M308.3 224.8V223.1A1.5 1.5 0 0 1 311.2 223.1V224.8Z"/><path d="M267.6 224.9V223.1A1.5 1.5 0 0 1 270.5 223.1V224.9Z"/><path d="M317.6 224.9V223.1A1.5 1.5 0 0 1 320.6 223.1V224.9Z"/><path d="M306.8 224.9V223.1A1.5 1.5 0 0 1 309.7 223.1V224.9Z"/><path d="M264.3 225V223.2A1.5 1.5 0 0 1 267.3 223.2V225Z"/><path d="M238.6 225V223.3A1.5 1.5 0 0 1 241.5 223.3V225Z"/><path d="M327.5 225.1V223.3A1.5 1.5 0 0 1 330.4 223.3V225.1Z"/><path d="M251.9 225.1V223.3A1.5 1.5 0 0 1 254.8 223.3V225.1Z"/><path d="M189 225.2V223.4A1.5 1.5 0 0 1 191.9 223.4V225.2Z"/><path d="M359.7 225.3V223.5A1.5 1.5 0 0 1 362.6 223.5V225.3Z"/><path d="M216.3 225.3V223.5A1.5 1.5 0 0 1 219.2 223.5V225.3Z"/><path d="M272.5 225.4V223.6A1.5 1.5 0 0 1 275.4 223.6V225.4Z"/><path d="M186.6 225.5V223.7A1.5 1.5 0 0 1 189.5 223.7V225.5Z"/><path d="M188.3 225.6V223.8A1.5 1.5 0 0 1 191.2 223.8V225.6Z"/><path d="M368.2 225.6V223.8A1.5 1.5 0 0 1 371.2 223.8V225.6Z"/><path d="M188.9 225.6V223.9A1.5 1.5 0 0 1 191.8 223.9V225.6Z"/><path d="M287.3 225.6V223.9A1.5 1.5 0 0 1 290.2 223.9V225.6Z"/><path d="M214.1 226.1V224.3A1.5 1.5 0 0 1 217 224.3V226.1Z"/><path d="M251.2 226.1V224.3A1.5 1.5 0 0 1 254.1 224.3V226.1Z"/><path d="M257.7 226.2V224.4A1.5 1.5 0 0 1 260.6 224.4V226.2Z"/><path d="M218.5 226.2V224.5A1.5 1.5 0 0 1 221.4 224.5V226.2Z"/><path d="M341.2 226.2V224.5A1.5 1.5 0 0 1 344.1 224.5V226.2Z"/><path d="M296.4 226.5V224.8A1.5 1.5 0 0 1 299.4 224.8V226.5Z"/><path d="M221.9 226.7V224.9A1.5 1.5 0 0 1 224.8 224.9V226.7Z"/><path d="M212.3 226.7V224.9A1.5 1.5 0 0 1 215.2 224.9V226.7Z"/><path d="M265.8 226.9V225.1A1.5 1.5 0 0 1 268.8 225.1V226.9Z"/><path d="M276.4 226.9V225.2A1.5 1.5 0 0 1 279.3 225.2V226.9Z"/><path d="M198.4 227V225.2A1.5 1.5 0 0 1 201.3 225.2V227Z"/><path d="M172 227V225.2A1.5 1.5 0 0 1 174.9 225.2V227Z"/><path d="M352.4 227V225.2A1.5 1.5 0 0 1 355.3 225.2V227Z"/><path d="M187.6 227.1V225.3A1.5 1.5 0 0 1 190.5 225.3V227.1Z"/><path d="M258.9 227.2V225.5A1.5 1.5 0 0 1 261.8 225.5V227.2Z"/><path d="M251.3 227.3V225.5A1.5 1.5 0 0 1 254.2 225.5V227.3Z"/><path d="M300.7 227.3V225.6A1.5 1.5 0 0 1 303.7 225.6V227.3Z"/><path d="M172.2 227.6V225.8A1.5 1.5 0 0 1 175.1 225.8V227.6Z"/><path d="M207.6 227.6V225.9A1.5 1.5 0 0 1 210.5 225.9V227.6Z"/><path d="M345.4 227.8V226A1.5 1.5 0 0 1 348.4 226V227.8Z"/><path d="M285.8 227.8V226.1A1.5 1.5 0 0 1 288.7 226.1V227.8Z"/><path d="M248.2 228.2V226.4A1.5 1.5 0 0 1 251.1 226.4V228.2Z"/><path d="M310.7 228.2V226.4A1.5 1.5 0 0 1 313.6 226.4V228.2Z"/><path d="M286.5 228.2V226.5A1.5 1.5 0 0 1 289.4 226.5V228.2Z"/><path d="M369.7 228.3V226.5A1.5 1.5 0 0 1 372.6 226.5V228.3Z"/><path d="M339.6 228.3V226.5A1.5 1.5 0 0 1 342.5 226.5V228.3Z"/><path d="M300.9 228.4V226.6A1.5 1.5 0 0 1 303.8 226.6V228.4Z"/><path d="M239.2 228.4V226.7A1.5 1.5 0 0 1 242.1 226.7V228.4Z"/><path d="M354.2 228.5V226.7A1.5 1.5 0 0 1 357.1 226.7V228.5Z"/><path d="M196.3 228.5V226.7A1.5 1.5 0 0 1 199.2 226.7V228.5Z"/><path d="M341.1 228.7V226.9A1.5 1.5 0 0 1 344 226.9V228.7Z"/><path d="M254.9 228.8V227A1.5 1.5 0 0 1 257.8 227V228.8Z"/><path d="M292 229.2V227.5A1.5 1.5 0 0 1 295 227.5V229.2Z"/><path d="M304.5 229.4V227.6A1.5 1.5 0 0 1 307.4 227.6V229.4Z"/><path d="M335.5 229.5V227.7A1.5 1.5 0 0 1 338.5 227.7V229.5Z"/><path d="M203.4 229.5V227.7A1.5 1.5 0 0 1 206.4 227.7V229.5Z"/><path d="M177.5 229.5V227.7A1.5 1.5 0 0 1 180.4 227.7V229.5Z"/><path d="M281.7 229.5V227.8A1.5 1.5 0 0 1 284.7 227.8V229.5Z"/><path d="M267.6 229.6V227.9A1.5 1.5 0 0 1 270.6 227.9V229.6Z"/><path d="M312.2 229.7V227.9A1.5 1.5 0 0 1 315.1 227.9V229.7Z"/><path d="M362.1 229.7V227.9A1.5 1.5 0 0 1 365.1 227.9V229.7Z"/><path d="M378.1 229.9V228.1A1.5 1.5 0 0 1 381.1 228.1V229.9Z"/><path d="M179.5 230.2V228.4A1.5 1.5 0 0 1 182.5 228.4V230.2Z"/><path d="M299.2 230.2V228.4A1.5 1.5 0 0 1 302.2 228.4V230.2Z"/><path d="M188 230.6V228.8A1.5 1.5 0 0 1 191 228.8V230.6Z"/><path d="M312.5 230.8V229A1.5 1.5 0 0 1 315.4 229V230.8Z"/><path d="M263.6 230.8V229A1.5 1.5 0 0 1 266.5 229V230.8Z"/><path d="M195.8 230.9V229.1A1.5 1.5 0 0 1 198.8 229.1V230.9Z"/><path d="M296.1 230.9V229.2A1.5 1.5 0 0 1 299.1 229.2V230.9Z"/><path d="M251.8 231V229.2A1.5 1.5 0 0 1 254.8 229.2V231Z"/><path d="M379.6 231V229.3A1.5 1.5 0 0 1 382.6 229.3V231Z"/><path d="M373.3 231V229.3A1.5 1.5 0 0 1 376.2 229.3V231Z"/><path d="M309.4 231.1V229.3A1.5 1.5 0 0 1 312.3 229.3V231.1Z"/><path d="M355.8 231.2V229.4A1.5 1.5 0 0 1 358.8 229.4V231.2Z"/><path d="M363.9 231.2V229.4A1.5 1.5 0 0 1 366.9 229.4V231.2Z"/><path d="M314 231.3V229.5A1.5 1.5 0 0 1 317 229.5V231.3Z"/><path d="M352.5 231.4V229.6A1.5 1.5 0 0 1 355.5 229.6V231.4Z"/><path d="M179.1 231.4V229.6A1.5 1.5 0 0 1 182.1 229.6V231.4Z"/><path d="M303.4 231.5V229.7A1.5 1.5 0 0 1 306.4 229.7V231.5Z"/><path d="M269.7 231.5V229.8A1.5 1.5 0 0 1 272.7 229.8V231.5Z"/><path d="M332.9 231.6V229.8A1.5 1.5 0 0 1 335.9 229.8V231.6Z"/><path d="M223.7 231.8V230A1.5 1.5 0 0 1 226.7 230V231.8Z"/><path d="M293.5 231.8V230A1.5 1.5 0 0 1 296.4 230V231.8Z"/><path d="M350.6 231.9V230.1A1.5 1.5 0 0 1 353.6 230.1V231.9Z"/><path d="M309.7 232V230.2A1.5 1.5 0 0 1 312.7 230.2V232Z"/><path d="M198.6 232V230.2A1.5 1.5 0 0 1 201.5 230.2V232Z"/><path d="M370.5 232V230.2A1.5 1.5 0 0 1 373.5 230.2V232Z"/><path d="M311 232.3V230.5A1.5 1.5 0 0 1 314 230.5V232.3Z"/><path d="M223.6 232.4V230.6A1.5 1.5 0 0 1 226.6 230.6V232.4Z"/><path d="M261.3 232.4V230.7A1.5 1.5 0 0 1 264.3 230.7V232.4Z"/><path d="M241 232.7V230.9A1.5 1.5 0 0 1 244 230.9V232.7Z"/><path d="M361.9 232.8V231A1.5 1.5 0 0 1 364.8 231V232.8Z"/><path d="M351.3 232.8V231A1.5 1.5 0 0 1 354.3 231V232.8Z"/><path d="M252.3 232.9V231.1A1.5 1.5 0 0 1 255.3 231.1V232.9Z"/><path d="M310.4 232.9V231.1A1.5 1.5 0 0 1 313.4 231.1V232.9Z"/><path d="M189.3 233V231.3A1.5 1.5 0 0 1 192.3 231.3V233Z"/><path d="M358.5 233.4V231.6A1.5 1.5 0 0 1 361.5 231.6V233.4Z"/><path d="M298.3 233.4V231.6A1.5 1.5 0 0 1 301.3 231.6V233.4Z"/><path d="M349.4 233.4V231.6A1.5 1.5 0 0 1 352.3 231.6V233.4Z"/><path d="M383.3 233.4V231.6A1.5 1.5 0 0 1 386.3 231.6V233.4Z"/><path d="M336.2 233.7V231.9A1.5 1.5 0 0 1 339.2 231.9V233.7Z"/><path d="M376.3 233.7V231.9A1.5 1.5 0 0 1 379.3 231.9V233.7Z"/><path d="M221.4 233.8V232A1.5 1.5 0 0 1 224.4 232V233.8Z"/><path d="M197.5 233.8V232A1.5 1.5 0 0 1 200.5 232V233.8Z"/><path d="M187.8 234V232.2A1.5 1.5 0 0 1 190.8 232.2V234Z"/><path d="M209.2 234V232.2A1.5 1.5 0 0 1 212.2 232.2V234Z"/><path d="M289.1 234.1V232.3A1.5 1.5 0 0 1 292.1 232.3V234.1Z"/><path d="M384.2 234.1V232.3A1.5 1.5 0 0 1 387.2 232.3V234.1Z"/><path d="M208.9 234.1V232.4A1.5 1.5 0 0 1 211.9 232.4V234.1Z"/><path d="M204 234.3V232.5A1.5 1.5 0 0 1 207 232.5V234.3Z"/><path d="M243.7 234.4V232.6A1.5 1.5 0 0 1 246.7 232.6V234.4Z"/><path d="M341.1 234.4V232.6A1.5 1.5 0 0 1 344.1 232.6V234.4Z"/><path d="M229.4 234.5V232.7A1.5 1.5 0 0 1 232.4 232.7V234.5Z"/><path d="M242.6 234.8V233A1.5 1.5 0 0 1 245.5 233V234.8Z"/><path d="M368.7 234.9V233.1A1.5 1.5 0 0 1 371.7 233.1V234.9Z"/><path d="M307.5 234.9V233.1A1.5 1.5 0 0 1 310.4 233.1V234.9Z"/><path d="M285.6 235V233.2A1.5 1.5 0 0 1 288.6 233.2V235Z"/><path d="M237.6 235V233.2A1.5 1.5 0 0 1 240.6 233.2V235Z"/><path d="M385.8 235V233.2A1.5 1.5 0 0 1 388.8 233.2V235Z"/><path d="M287.9 235.1V233.3A1.5 1.5 0 0 1 290.9 233.3V235.1Z"/><path d="M187.9 235.1V233.3A1.5 1.5 0 0 1 190.9 233.3V235.1Z"/><path d="M263.4 235.1V233.3A1.5 1.5 0 0 1 266.4 233.3V235.1Z"/><path d="M294.7 235.1V233.3A1.5 1.5 0 0 1 297.7 233.3V235.1Z"/><path d="M335.5 235.2V233.4A1.5 1.5 0 0 1 338.5 233.4V235.2Z"/><path d="M355.3 235.3V233.5A1.5 1.5 0 0 1 358.3 233.5V235.3Z"/><path d="M220.2 235.3V233.5A1.5 1.5 0 0 1 223.2 233.5V235.3Z"/><path d="M257.9 235.4V233.6A1.5 1.5 0 0 1 260.9 233.6V235.4Z"/><path d="M230.9 235.4V233.6A1.5 1.5 0 0 1 233.9 233.6V235.4Z"/><path d="M335.1 235.4V233.6A1.5 1.5 0 0 1 338.1 233.6V235.4Z"/><path d="M351.1 235.4V233.6A1.5 1.5 0 0 1 354.1 233.6V235.4Z"/><path d="M301.3 235.6V233.8A1.5 1.5 0 0 1 304.2 233.8V235.6Z"/><path d="M336.9 235.6V233.8A1.5 1.5 0 0 1 339.9 233.8V235.6Z"/><path d="M365.2 235.6V233.8A1.5 1.5 0 0 1 368.2 233.8V235.6Z"/><path d="M356.3 235.7V233.9A1.5 1.5 0 0 1 359.3 233.9V235.7Z"/><path d="M261.5 235.7V233.9A1.5 1.5 0 0 1 264.5 233.9V235.7Z"/><path d="M376.2 235.8V234A1.5 1.5 0 0 1 379.2 234V235.8Z"/><path d="M189.9 235.8V234A1.5 1.5 0 0 1 192.8 234V235.8Z"/><path d="M185 235.8V234A1.5 1.5 0 0 1 187.9 234V235.8Z"/><path d="M184.6 236V234.2A1.5 1.5 0 0 1 187.6 234.2V236Z"/><path d="M311.8 236.1V234.3A1.5 1.5 0 0 1 314.8 234.3V236.1Z"/><path d="M218.1 236.2V234.4A1.5 1.5 0 0 1 221 234.4V236.2Z"/><path d="M327.2 236.4V234.6A1.5 1.5 0 0 1 330.2 234.6V236.4Z"/><path d="M259.1 236.5V234.7A1.5 1.5 0 0 1 262.1 234.7V236.5Z"/><path d="M250.8 236.5V234.7A1.5 1.5 0 0 1 253.8 234.7V236.5Z"/><path d="M192.4 236.7V234.9A1.5 1.5 0 0 1 195.4 234.9V236.7Z"/><path d="M232.9 236.7V234.9A1.5 1.5 0 0 1 235.9 234.9V236.7Z"/><path d="M255.4 236.8V235A1.5 1.5 0 0 1 258.4 235V236.8Z"/><path d="M215.8 236.9V235.1A1.5 1.5 0 0 1 218.8 235.1V236.9Z"/><path d="M223.8 236.9V235.1A1.5 1.5 0 0 1 226.8 235.1V236.9Z"/><path d="M267.3 236.9V235.1A1.5 1.5 0 0 1 270.3 235.1V236.9Z"/><path d="M323.7 236.9V235.1A1.5 1.5 0 0 1 326.7 235.1V236.9Z"/><path d="M321.6 237V235.2A1.5 1.5 0 0 1 324.6 235.2V237Z"/><path d="M269.3 237V235.2A1.5 1.5 0 0 1 272.3 235.2V237Z"/><path d="M252 237.2V235.3A1.5 1.5 0 0 1 255 235.3V237.2Z"/><path d="M328.3 237.2V235.4A1.5 1.5 0 0 1 331.3 235.4V237.2Z"/><path d="M307.6 237.3V235.4A1.5 1.5 0 0 1 310.6 235.4V237.3Z"/><path d="M318.4 237.4V235.6A1.5 1.5 0 0 1 321.4 235.6V237.4Z"/><path d="M221.3 237.6V235.8A1.5 1.5 0 0 1 224.3 235.8V237.6Z"/><path d="M195.9 237.6V235.8A1.5 1.5 0 0 1 198.9 235.8V237.6Z"/><path d="M369.3 237.7V235.9A1.5 1.5 0 0 1 372.3 235.9V237.7Z"/><path d="M360.3 237.8V236A1.5 1.5 0 0 1 363.3 236V237.8Z"/><path d="M205.5 237.9V236.1A1.5 1.5 0 0 1 208.5 236.1V237.9Z"/><path d="M249.6 237.9V236.1A1.5 1.5 0 0 1 252.6 236.1V237.9Z"/><path d="M314 238.1V236.3A1.5 1.5 0 0 1 317 236.3V238.1Z"/><path d="M376.9 238.2V236.3A1.5 1.5 0 0 1 379.9 236.3V238.2Z"/><path d="M265 238.2V236.4A1.5 1.5 0 0 1 268 236.4V238.2Z"/><path d="M208.6 238.2V236.4A1.5 1.5 0 0 1 211.6 236.4V238.2Z"/><path d="M295.9 238.2V236.4A1.5 1.5 0 0 1 298.9 236.4V238.2Z"/><path d="M338 238.2V236.4A1.5 1.5 0 0 1 341 236.4V238.2Z"/><path d="M198 238.4V236.6A1.5 1.5 0 0 1 201 236.6V238.4Z"/><path d="M384.9 238.5V236.7A1.5 1.5 0 0 1 387.9 236.7V238.5Z"/><path d="M344.1 238.7V236.8A1.5 1.5 0 0 1 347.1 236.8V238.7Z"/><path d="M331.7 238.7V236.9A1.5 1.5 0 0 1 334.7 236.9V238.7Z"/><path d="M322.2 239V237.2A1.5 1.5 0 0 1 325.2 237.2V239Z"/><path d="M187.5 239.1V237.3A1.5 1.5 0 0 1 190.6 237.3V239.1Z"/><path d="M352.8 239.2V237.4A1.5 1.5 0 0 1 355.8 237.4V239.2Z"/><path d="M309.4 239.2V237.4A1.5 1.5 0 0 1 312.4 237.4V239.2Z"/><path d="M288.4 239.3V237.5A1.5 1.5 0 0 1 291.4 237.5V239.3Z"/><path d="M246.8 239.3V237.5A1.5 1.5 0 0 1 249.8 237.5V239.3Z"/><path d="M364.7 239.4V237.6A1.5 1.5 0 0 1 367.8 237.6V239.4Z"/><path d="M399.4 239.6V237.8A1.5 1.5 0 0 1 402.4 237.8V239.6Z"/><path d="M250.5 239.6V237.8A1.5 1.5 0 0 1 253.5 237.8V239.6Z"/><path d="M243.2 239.6V237.8A1.5 1.5 0 0 1 246.2 237.8V239.6Z"/><path d="M241.1 239.7V237.9A1.5 1.5 0 0 1 244.1 237.9V239.7Z"/><path d="M356.8 239.8V237.9A1.5 1.5 0 0 1 359.8 237.9V239.8Z"/><path d="M233 239.8V238A1.5 1.5 0 0 1 236 238V239.8Z"/><path d="M245.4 240.1V238.3A1.5 1.5 0 0 1 248.4 238.3V240.1Z"/><path d="M343.2 240.2V238.3A1.5 1.5 0 0 1 346.2 238.3V240.2Z"/><path d="M215.4 240.3V238.4A1.5 1.5 0 0 1 218.4 238.4V240.3Z"/><path d="M285.9 240.3V238.5A1.5 1.5 0 0 1 288.9 238.5V240.3Z"/><path d="M286.2 240.4V238.5A1.5 1.5 0 0 1 289.2 238.5V240.4Z"/><path d="M297.6 240.4V238.6A1.5 1.5 0 0 1 300.6 238.6V240.4Z"/><path d="M395.2 240.4V238.6A1.5 1.5 0 0 1 398.2 238.6V240.4Z"/><path d="M386.4 240.5V238.7A1.5 1.5 0 0 1 389.4 238.7V240.5Z"/><path d="M222.9 240.7V238.9A1.5 1.5 0 0 1 225.9 238.9V240.7Z"/><path d="M327.3 240.7V238.9A1.5 1.5 0 0 1 330.4 238.9V240.7Z"/><path d="M229 240.7V238.9A1.5 1.5 0 0 1 232 238.9V240.7Z"/><path d="M239.5 240.7V238.9A1.5 1.5 0 0 1 242.5 238.9V240.7Z"/><path d="M311.4 240.8V239A1.5 1.5 0 0 1 314.4 239V240.8Z"/><path d="M225.8 240.9V239.1A1.5 1.5 0 0 1 228.8 239.1V240.9Z"/><path d="M248.5 240.9V239.1A1.5 1.5 0 0 1 251.5 239.1V240.9Z"/><path d="M237.7 241.1V239.3A1.5 1.5 0 0 1 240.7 239.3V241.1Z"/><path d="M219.8 241.2V239.3A1.5 1.5 0 0 1 222.8 239.3V241.2Z"/><path d="M277.2 241.3V239.4A1.5 1.5 0 0 1 280.2 239.4V241.3Z"/><path d="M332.2 241.7V239.8A1.5 1.5 0 0 1 335.3 239.8V241.7Z"/><path d="M191.2 241.7V239.9A1.5 1.5 0 0 1 194.2 239.9V241.7Z"/><path d="M191.5 241.8V240A1.5 1.5 0 0 1 194.5 240V241.8Z"/><path d="M394.3 241.8V240A1.5 1.5 0 0 1 397.3 240V241.8Z"/><path d="M201.3 241.9V240A1.5 1.5 0 0 1 204.3 240V241.9Z"/><path d="M225.6 241.9V240.1A1.5 1.5 0 0 1 228.6 240.1V241.9Z"/><path d="M370.2 241.9V240.1A1.5 1.5 0 0 1 373.2 240.1V241.9Z"/><path d="M396.9 242V240.2A1.5 1.5 0 0 1 399.9 240.2V242Z"/><path d="M217.5 242.3V240.4A1.5 1.5 0 0 1 220.6 240.4V242.3Z"/><path d="M397.8 242.3V240.5A1.5 1.5 0 0 1 400.9 240.5V242.3Z"/><path d="M355.5 242.3V240.5A1.5 1.5 0 0 1 358.5 240.5V242.3Z"/><path d="M315.3 242.4V240.5A1.5 1.5 0 0 1 318.3 240.5V242.4Z"/><path d="M401.3 242.4V240.6A1.5 1.5 0 0 1 404.3 240.6V242.4Z"/><path d="M328.2 242.6V240.7A1.5 1.5 0 0 1 331.2 240.7V242.6Z"/><path d="M404.6 242.7V240.9A1.5 1.5 0 0 1 407.6 240.9V242.7Z"/><path d="M319.8 242.8V241A1.5 1.5 0 0 1 322.8 241V242.8Z"/><path d="M326.8 242.8V241A1.5 1.5 0 0 1 329.8 241V242.8Z"/><path d="M239.4 242.9V241.1A1.5 1.5 0 0 1 242.5 241.1V242.9Z"/><path d="M261.4 242.9V241.1A1.5 1.5 0 0 1 264.5 241.1V242.9Z"/><path d="M209.8 243.1V241.2A1.5 1.5 0 0 1 212.9 241.2V243.1Z"/><path d="M399.9 243.1V241.2A1.5 1.5 0 0 1 402.9 241.2V243.1Z"/><path d="M220.3 243.1V241.3A1.5 1.5 0 0 1 223.4 241.3V243.1Z"/><path d="M274.3 243.1V241.3A1.5 1.5 0 0 1 277.3 241.3V243.1Z"/><path d="M369.3 243.2V241.4A1.5 1.5 0 0 1 372.4 241.4V243.2Z"/><path d="M351.2 243.3V241.5A1.5 1.5 0 0 1 354.2 241.5V243.3Z"/><path d="M212.7 243.3V241.5A1.5 1.5 0 0 1 215.7 241.5V243.3Z"/><path d="M371.1 243.4V241.6A1.5 1.5 0 0 1 374.1 241.6V243.4Z"/><path d="M351.2 243.5V241.7A1.5 1.5 0 0 1 354.3 241.7V243.5Z"/><path d="M353.6 243.6V241.7A1.5 1.5 0 0 1 356.6 241.7V243.6Z"/><path d="M316.6 243.7V241.8A1.5 1.5 0 0 1 319.6 241.8V243.7Z"/><path d="M395 243.7V241.9A1.5 1.5 0 0 1 398 241.9V243.7Z"/><path d="M260.7 243.8V241.9A1.5 1.5 0 0 1 263.7 241.9V243.8Z"/><path d="M278.2 243.8V242A1.5 1.5 0 0 1 281.2 242V243.8Z"/><path d="M314.2 243.8V242A1.5 1.5 0 0 1 317.3 242V243.8Z"/><path d="M409.2 243.8V242A1.5 1.5 0 0 1 412.2 242V243.8Z"/><path d="M274.8 243.8V242A1.5 1.5 0 0 1 277.9 242V243.8Z"/><path d="M198.5 243.9V242.1A1.5 1.5 0 0 1 201.5 242.1V243.9Z"/><path d="M374 243.9V242.1A1.5 1.5 0 0 1 377.1 242.1V243.9Z"/><path d="M291.7 244V242.1A1.5 1.5 0 0 1 294.8 242.1V244Z"/><path d="M295.7 244.1V242.2A1.5 1.5 0 0 1 298.7 242.2V244.1Z"/><path d="M292.5 244.1V242.2A1.5 1.5 0 0 1 295.5 242.2V244.1Z"/><path d="M393.2 244.2V242.3A1.5 1.5 0 0 1 396.2 242.3V244.2Z"/><path d="M316.4 244.2V242.4A1.5 1.5 0 0 1 319.4 242.4V244.2Z"/><path d="M373.6 244.2V242.4A1.5 1.5 0 0 1 376.7 242.4V244.2Z"/><path d="M342.5 244.3V242.5A1.5 1.5 0 0 1 345.6 242.5V244.3Z"/><path d="M198 244.3V242.5A1.5 1.5 0 0 1 201.1 242.5V244.3Z"/><path d="M251.3 244.5V242.7A1.5 1.5 0 0 1 254.4 242.7V244.5Z"/><path d="M298.5 244.5V242.7A1.5 1.5 0 0 1 301.5 242.7V244.5Z"/><path d="M351.1 244.7V242.8A1.5 1.5 0 0 1 354.2 242.8V244.7Z"/><path d="M350 244.7V242.9A1.5 1.5 0 0 1 353 242.9V244.7Z"/><path d="M355 244.8V243A1.5 1.5 0 0 1 358 243V244.8Z"/><path d="M340.8 244.9V243.1A1.5 1.5 0 0 1 343.9 243.1V244.9Z"/><path d="M305 245V243.1A1.5 1.5 0 0 1 308.1 243.1V245Z"/><path d="M275.6 245.1V243.2A1.5 1.5 0 0 1 278.7 243.2V245.1Z"/><path d="M401.8 245.1V243.3A1.5 1.5 0 0 1 404.9 243.3V245.1Z"/><path d="M271.6 245.2V243.4A1.5 1.5 0 0 1 274.6 243.4V245.2Z"/><path d="M216.9 245.3V243.4A1.5 1.5 0 0 1 220 243.4V245.3Z"/><path d="M256.7 245.3V243.4A1.5 1.5 0 0 1 259.7 243.4V245.3Z"/><path d="M348.3 245.3V243.5A1.5 1.5 0 0 1 351.4 243.5V245.3Z"/><path d="M400.1 245.5V243.6A1.5 1.5 0 0 1 403.1 243.6V245.5Z"/><path d="M336.9 245.6V243.8A1.5 1.5 0 0 1 340 243.8V245.6Z"/><path d="M345.3 245.6V243.8A1.5 1.5 0 0 1 348.3 243.8V245.6Z"/><path d="M244 245.9V244A1.5 1.5 0 0 1 247.1 244V245.9Z"/><path d="M380.2 245.9V244A1.5 1.5 0 0 1 383.2 244V245.9Z"/><path d="M368.7 245.9V244.1A1.5 1.5 0 0 1 371.8 244.1V245.9Z"/><path d="M228.7 246V244.2A1.5 1.5 0 0 1 231.7 244.2V246Z"/><path d="M204.9 246.1V244.2A1.5 1.5 0 0 1 208 244.2V246.1Z"/><path d="M252.7 246.1V244.2A1.5 1.5 0 0 1 255.8 244.2V246.1Z"/><path d="M375.3 246.1V244.3A1.5 1.5 0 0 1 378.4 244.3V246.1Z"/><path d="M339.6 246.2V244.4A1.5 1.5 0 0 1 342.7 244.4V246.2Z"/><path d="M361.1 246.6V244.7A1.5 1.5 0 0 1 364.1 244.7V246.6Z"/><path d="M252.9 246.7V244.8A1.5 1.5 0 0 1 255.9 244.8V246.7Z"/><path d="M270.2 246.8V244.9A1.5 1.5 0 0 1 273.3 244.9V246.8Z"/><path d="M363.5 246.8V244.9A1.5 1.5 0 0 1 366.6 244.9V246.8Z"/><path d="M356.7 246.8V245A1.5 1.5 0 0 1 359.8 245V246.8Z"/><path d="M346.9 247V245.2A1.5 1.5 0 0 1 350 245.2V247Z"/><path d="M240.7 247.2V245.3A1.5 1.5 0 0 1 243.7 245.3V247.2Z"/><path d="M296.9 247.2V245.3A1.5 1.5 0 0 1 300 245.3V247.2Z"/><path d="M288.3 247.2V245.3A1.5 1.5 0 0 1 291.3 245.3V247.2Z"/><path d="M314.2 247.3V245.5A1.5 1.5 0 0 1 317.3 245.5V247.3Z"/><path d="M218.5 247.5V245.6A1.5 1.5 0 0 1 221.5 245.6V247.5Z"/><path d="M409.8 247.5V245.6A1.5 1.5 0 0 1 412.9 245.6V247.5Z"/><path d="M383.2 247.5V245.7A1.5 1.5 0 0 1 386.3 245.7V247.5Z"/><path d="M383.5 247.8V245.9A1.5 1.5 0 0 1 386.6 245.9V247.8Z"/><path d="M252.8 248.3V246.4A1.5 1.5 0 0 1 255.9 246.4V248.3Z"/><path d="M206.8 248.3V246.4A1.5 1.5 0 0 1 209.9 246.4V248.3Z"/><path d="M203 248.4V246.5A1.5 1.5 0 0 1 206.1 246.5V248.4Z"/><path d="M329.8 248.4V246.5A1.5 1.5 0 0 1 332.8 246.5V248.4Z"/><path d="M222.7 248.5V246.7A1.5 1.5 0 0 1 225.8 246.7V248.5Z"/><path d="M269.1 248.6V246.8A1.5 1.5 0 0 1 272.2 246.8V248.6Z"/><path d="M201.4 248.7V246.8A1.5 1.5 0 0 1 204.5 246.8V248.7Z"/><path d="M312.3 248.7V246.9A1.5 1.5 0 0 1 315.4 246.9V248.7Z"/><path d="M255.3 248.9V247A1.5 1.5 0 0 1 258.4 247V248.9Z"/><path d="M308.8 249V247.1A1.5 1.5 0 0 1 311.9 247.1V249Z"/><path d="M397.3 249V247.1A1.5 1.5 0 0 1 400.4 247.1V249Z"/><path d="M319.6 249.1V247.2A1.5 1.5 0 0 1 322.7 247.2V249.1Z"/><path d="M214.5 249.1V247.3A1.5 1.5 0 0 1 217.6 247.3V249.1Z"/><path d="M269.4 249.2V247.3A1.5 1.5 0 0 1 272.5 247.3V249.2Z"/><path d="M290.1 249.3V247.5A1.5 1.5 0 0 1 293.2 247.5V249.3Z"/><path d="M294.1 249.4V247.5A1.5 1.5 0 0 1 297.2 247.5V249.4Z"/><path d="M392.1 249.5V247.7A1.5 1.5 0 0 1 395.2 247.7V249.5Z"/><path d="M215.6 249.6V247.7A1.5 1.5 0 0 1 218.7 247.7V249.6Z"/><path d="M231.4 249.7V247.8A1.5 1.5 0 0 1 234.4 247.8V249.7Z"/><path d="M417.7 249.7V247.9A1.5 1.5 0 0 1 420.8 247.9V249.7Z"/><path d="M312.6 250.2V248.3A1.6 1.6 0 0 1 315.7 248.3V250.2Z"/><path d="M404.4 250.4V248.6A1.6 1.6 0 0 1 407.5 248.6V250.4Z"/><path d="M225.7 250.5V248.7A1.6 1.6 0 0 1 228.8 248.7V250.5Z"/><path d="M278.7 250.8V249A1.6 1.6 0 0 1 281.8 249V250.8Z"/><path d="M227.5 251V249.1A1.6 1.6 0 0 1 230.6 249.1V251Z"/><path d="M235.1 251V249.2A1.6 1.6 0 0 1 238.2 249.2V251Z"/><path d="M282 251.1V249.2A1.6 1.6 0 0 1 285.1 249.2V251.1Z"/><path d="M289.8 251.2V249.3A1.6 1.6 0 0 1 292.9 249.3V251.2Z"/><path d="M238.5 251.2V249.3A1.6 1.6 0 0 1 241.6 249.3V251.2Z"/><path d="M287.7 251.3V249.4A1.6 1.6 0 0 1 290.8 249.4V251.3Z"/><path d="M274.5 251.3V249.5A1.6 1.6 0 0 1 277.6 249.5V251.3Z"/><path d="M316.4 251.4V249.5A1.6 1.6 0 0 1 319.5 249.5V251.4Z"/><path d="M207.7 251.4V249.5A1.6 1.6 0 0 1 210.8 249.5V251.4Z"/><path d="M280.5 251.4V249.6A1.6 1.6 0 0 1 283.6 249.6V251.4Z"/><path d="M248.1 251.5V249.7A1.6 1.6 0 0 1 251.2 249.7V251.5Z"/><path d="M403.6 251.6V249.7A1.6 1.6 0 0 1 406.7 249.7V251.6Z"/><path d="M295.1 251.8V249.9A1.6 1.6 0 0 1 298.3 249.9V251.8Z"/><path d="M351.6 251.8V249.9A1.6 1.6 0 0 1 354.7 249.9V251.8Z"/><path d="M261.3 252V250.1A1.6 1.6 0 0 1 264.4 250.1V252Z"/><path d="M299.1 252.1V250.3A1.6 1.6 0 0 1 302.2 250.3V252.1Z"/><path d="M375 252.2V250.3A1.6 1.6 0 0 1 378.1 250.3V252.2Z"/><path d="M387.4 252.3V250.4A1.6 1.6 0 0 1 390.6 250.4V252.3Z"/><path d="M206.3 252.4V250.6A1.6 1.6 0 0 1 209.4 250.6V252.4Z"/><path d="M424.1 252.7V250.8A1.6 1.6 0 0 1 427.2 250.8V252.7Z"/><path d="M320 252.7V250.8A1.6 1.6 0 0 1 323.1 250.8V252.7Z"/><path d="M309.8 252.7V250.8A1.6 1.6 0 0 1 313 250.8V252.7Z"/><path d="M343.4 253V251.1A1.6 1.6 0 0 1 346.5 251.1V253Z"/><path d="M346.7 253V251.1A1.6 1.6 0 0 1 349.8 251.1V253Z"/><path d="M221.6 253.1V251.2A1.6 1.6 0 0 1 224.7 251.2V253.1Z"/><path d="M417.1 253.1V251.3A1.6 1.6 0 0 1 420.3 251.3V253.1Z"/><path d="M250 253.4V251.5A1.6 1.6 0 0 1 253.2 251.5V253.4Z"/><path d="M318 253.5V251.6A1.6 1.6 0 0 1 321.1 251.6V253.5Z"/><path d="M382.2 253.7V251.8A1.6 1.6 0 0 1 385.3 251.8V253.7Z"/><path d="M263.2 253.7V251.8A1.6 1.6 0 0 1 266.4 251.8V253.7Z"/><path d="M356.2 253.8V251.9A1.6 1.6 0 0 1 359.3 251.9V253.8Z"/><path d="M294.6 253.8V252A1.6 1.6 0 0 1 297.7 252V253.8Z"/><path d="M408.4 253.9V252A1.6 1.6 0 0 1 411.5 252V253.9Z"/><path d="M365.5 254.2V252.3A1.6 1.6 0 0 1 368.6 252.3V254.2Z"/><path d="M320.3 254.3V252.4A1.6 1.6 0 0 1 323.4 252.4V254.3Z"/><path d="M409 254.3V252.4A1.6 1.6 0 0 1 412.1 252.4V254.3Z"/><path d="M406.3 254.3V252.4A1.6 1.6 0 0 1 409.5 252.4V254.3Z"/><path d="M232.3 254.3V252.4A1.6 1.6 0 0 1 235.4 252.4V254.3Z"/><path d="M265.2 254.8V252.9A1.6 1.6 0 0 1 268.3 252.9V254.8Z"/><path d="M396.7 254.8V252.9A1.6 1.6 0 0 1 399.8 252.9V254.8Z"/><path d="M297.2 254.9V253A1.6 1.6 0 0 1 300.3 253V254.9Z"/><path d="M279 254.9V253A1.6 1.6 0 0 1 282.1 253V254.9Z"/><path d="M212.3 254.9V253A1.6 1.6 0 0 1 215.5 253V254.9Z"/><path d="M210.4 255V253.1A1.6 1.6 0 0 1 213.5 253.1V255Z"/><path d="M373.1 255.1V253.2A1.6 1.6 0 0 1 376.3 253.2V255.1Z"/><path d="M408.7 255.1V253.2A1.6 1.6 0 0 1 411.8 253.2V255.1Z"/><path d="M326.8 255.1V253.2A1.6 1.6 0 0 1 329.9 253.2V255.1Z"/><path d="M275.1 255.6V253.7A1.6 1.6 0 0 1 278.3 253.7V255.6Z"/><path d="M338.6 255.6V253.7A1.6 1.6 0 0 1 341.7 253.7V255.6Z"/><path d="M313.3 255.6V253.7A1.6 1.6 0 0 1 316.5 253.7V255.6Z"/><path d="M273.7 255.7V253.8A1.6 1.6 0 0 1 276.9 253.8V255.7Z"/><path d="M271.5 255.7V253.8A1.6 1.6 0 0 1 274.6 253.8V255.7Z"/><path d="M318.9 255.9V254A1.6 1.6 0 0 1 322.1 254V255.9Z"/><path d="M264.7 255.9V254A1.6 1.6 0 0 1 267.8 254V255.9Z"/><path d="M274.3 255.9V254A1.6 1.6 0 0 1 277.4 254V255.9Z"/><path d="M330.8 256V254.1A1.6 1.6 0 0 1 333.9 254.1V256Z"/><path d="M309.8 256V254.1A1.6 1.6 0 0 1 313 254.1V256Z"/><path d="M407 256V254.1A1.6 1.6 0 0 1 410.1 254.1V256Z"/><path d="M279.5 256V254.2A1.6 1.6 0 0 1 282.6 254.2V256Z"/><path d="M285.2 256.1V254.2A1.6 1.6 0 0 1 288.4 254.2V256.1Z"/><path d="M307.1 256.2V254.3A1.6 1.6 0 0 1 310.2 254.3V256.2Z"/><path d="M330.2 256.3V254.4A1.6 1.6 0 0 1 333.4 254.4V256.3Z"/><path d="M409.4 256.4V254.5A1.6 1.6 0 0 1 412.5 254.5V256.4Z"/><path d="M311.2 256.5V254.6A1.6 1.6 0 0 1 314.4 254.6V256.5Z"/><path d="M258.9 256.6V254.7A1.6 1.6 0 0 1 262 254.7V256.6Z"/><path d="M258.4 256.7V254.8A1.6 1.6 0 0 1 261.6 254.8V256.7Z"/><path d="M216.5 256.8V254.9A1.6 1.6 0 0 1 219.6 254.9V256.8Z"/><path d="M245.3 256.9V255A1.6 1.6 0 0 1 248.4 255V256.9Z"/><path d="M268.1 256.9V255A1.6 1.6 0 0 1 271.3 255V256.9Z"/><path d="M265.8 257.2V255.3A1.6 1.6 0 0 1 268.9 255.3V257.2Z"/><path d="M316.7 257.3V255.4A1.6 1.6 0 0 1 319.8 255.4V257.3Z"/><path d="M271.7 257.4V255.5A1.6 1.6 0 0 1 274.9 255.5V257.4Z"/><path d="M295.1 257.4V255.5A1.6 1.6 0 0 1 298.2 255.5V257.4Z"/><path d="M216 257.5V255.6A1.6 1.6 0 0 1 219.1 255.6V257.5Z"/><path d="M248.8 257.8V255.9A1.6 1.6 0 0 1 252 255.9V257.8Z"/><path d="M337.2 257.8V255.9A1.6 1.6 0 0 1 340.4 255.9V257.8Z"/><path d="M357.7 257.8V255.9A1.6 1.6 0 0 1 360.9 255.9V257.8Z"/><path d="M410.1 257.9V256A1.6 1.6 0 0 1 413.3 256V257.9Z"/><path d="M315.2 258V256.1A1.6 1.6 0 0 1 318.3 256.1V258Z"/><path d="M236.2 258.1V256.2A1.6 1.6 0 0 1 239.4 256.2V258.1Z"/><path d="M387.1 258.1V256.2A1.6 1.6 0 0 1 390.2 256.2V258.1Z"/><path d="M382 258.2V256.3A1.6 1.6 0 0 1 385.2 256.3V258.2Z"/><path d="M377.3 258.3V256.4A1.6 1.6 0 0 1 380.5 256.4V258.3Z"/><path d="M279.1 258.7V256.7A1.6 1.6 0 0 1 282.3 256.7V258.7Z"/><path d="M386.1 258.7V256.8A1.6 1.6 0 0 1 389.3 256.8V258.7Z"/><path d="M285.6 258.7V256.8A1.6 1.6 0 0 1 288.8 256.8V258.7Z"/><path d="M226.5 258.8V256.9A1.6 1.6 0 0 1 229.7 256.9V258.8Z"/><path d="M359 258.8V256.9A1.6 1.6 0 0 1 362.1 256.9V258.8Z"/><path d="M320.8 258.9V257A1.6 1.6 0 0 1 324 257V258.9Z"/><path d="M378.1 259V257.1A1.6 1.6 0 0 1 381.3 257.1V259Z"/><path d="M360.8 259V257.1A1.6 1.6 0 0 1 364 257.1V259Z"/><path d="M363 259.2V257.3A1.6 1.6 0 0 1 366.2 257.3V259.2Z"/><path d="M290.6 259.6V257.7A1.6 1.6 0 0 1 293.8 257.7V259.6Z"/><path d="M365.6 259.6V257.7A1.6 1.6 0 0 1 368.7 257.7V259.6Z"/><path d="M385.6 259.8V257.9A1.6 1.6 0 0 1 388.8 257.9V259.8Z"/><path d="M266.7 259.8V257.9A1.6 1.6 0 0 1 269.8 257.9V259.8Z"/><path d="M250.1 259.8V257.9A1.6 1.6 0 0 1 253.3 257.9V259.8Z"/><path d="M225.9 259.8V257.9A1.6 1.6 0 0 1 229.1 257.9V259.8Z"/><path d="M278.9 259.9V258A1.6 1.6 0 0 1 282.1 258V259.9Z"/><path d="M318.9 260V258.1A1.6 1.6 0 0 1 322.1 258.1V260Z"/><path d="M370.5 260.2V258.3A1.6 1.6 0 0 1 373.6 258.3V260.2Z"/><path d="M241.2 260.3V258.3A1.6 1.6 0 0 1 244.3 258.3V260.3Z"/><path d="M232.1 260.7V258.7A1.6 1.6 0 0 1 235.3 258.7V260.7Z"/><path d="M301.3 260.7V258.8A1.6 1.6 0 0 1 304.5 258.8V260.7Z"/><path d="M247.2 260.8V258.9A1.6 1.6 0 0 1 250.4 258.9V260.8Z"/><path d="M258.5 261V259.1A1.6 1.6 0 0 1 261.6 259.1V261Z"/><path d="M277 261V259.1A1.6 1.6 0 0 1 280.2 259.1V261Z"/><path d="M248.1 261.2V259.3A1.6 1.6 0 0 1 251.3 259.3V261.2Z"/><path d="M236 261.4V259.5A1.6 1.6 0 0 1 239.2 259.5V261.4Z"/><path d="M247.1 261.5V259.5A1.6 1.6 0 0 1 250.3 259.5V261.5Z"/><path d="M325.3 261.6V259.6A1.6 1.6 0 0 1 328.5 259.6V261.6Z"/><path d="M233.2 261.6V259.7A1.6 1.6 0 0 1 236.4 259.7V261.6Z"/><path d="M226 261.8V259.9A1.6 1.6 0 0 1 229.2 259.9V261.8Z"/><path d="M384.2 262V260.1A1.6 1.6 0 0 1 387.4 260.1V262Z"/><path d="M312.2 262V260.1A1.6 1.6 0 0 1 315.4 260.1V262Z"/><path d="M328.4 262.5V260.6A1.6 1.6 0 0 1 331.6 260.6V262.5Z"/><path d="M299.8 262.6V260.7A1.6 1.6 0 0 1 303 260.7V262.6Z"/><path d="M385 263V261.1A1.6 1.6 0 0 1 388.2 261.1V263Z"/><path d="M266.4 263.1V261.1A1.6 1.6 0 0 1 269.6 261.1V263.1Z"/><path d="M251.8 263.2V261.3A1.6 1.6 0 0 1 255 261.3V263.2Z"/><path d="M296.4 263.7V261.8A1.6 1.6 0 0 1 299.6 261.8V263.7Z"/><path d="M301.4 263.8V261.9A1.6 1.6 0 0 1 304.6 261.9V263.8Z"/><path d="M251 263.9V262A1.6 1.6 0 0 1 254.3 262V263.9Z"/><path d="M239.6 264.1V262.2A1.6 1.6 0 0 1 242.8 262.2V264.1Z"/><path d="M344.5 264.2V262.3A1.6 1.6 0 0 1 347.8 262.3V264.2Z"/><path d="M348.5 264.2V262.3A1.6 1.6 0 0 1 351.7 262.3V264.2Z"/><path d="M224.4 264.3V262.3A1.6 1.6 0 0 1 227.6 262.3V264.3Z"/><path d="M248.3 264.3V262.3A1.6 1.6 0 0 1 251.5 262.3V264.3Z"/><path d="M372.8 264.4V262.4A1.6 1.6 0 0 1 376 262.4V264.4Z"/><path d="M228.3 264.4V262.5A1.6 1.6 0 0 1 231.5 262.5V264.4Z"/><path d="M378.6 264.4V262.5A1.6 1.6 0 0 1 381.8 262.5V264.4Z"/><path d="M224 264.5V262.6A1.6 1.6 0 0 1 227.2 262.6V264.5Z"/><path d="M267.1 264.6V262.7A1.6 1.6 0 0 1 270.3 262.7V264.6Z"/><path d="M283 265.1V263.1A1.6 1.6 0 0 1 286.2 263.1V265.1Z"/><path d="M307.9 265.1V263.1A1.6 1.6 0 0 1 311.1 263.1V265.1Z"/><path d="M257.1 265.3V263.3A1.6 1.6 0 0 1 260.3 263.3V265.3Z"/><path d="M271 265.4V263.4A1.6 1.6 0 0 1 274.2 263.4V265.4Z"/><path d="M319.5 265.4V263.4A1.6 1.6 0 0 1 322.7 263.4V265.4Z"/><path d="M371.1 265.9V264A1.6 1.6 0 0 1 374.3 264V265.9Z"/><path d="M250.9 266.3V264.4A1.6 1.6 0 0 1 254.1 264.4V266.3Z"/><path d="M251 266.4V264.5A1.6 1.6 0 0 1 254.2 264.5V266.4Z"/><path d="M344.2 266.5V264.6A1.6 1.6 0 0 1 347.4 264.6V266.5Z"/><path d="M340.4 266.8V264.9A1.6 1.6 0 0 1 343.7 264.9V266.8Z"/><path d="M339.1 266.9V265A1.6 1.6 0 0 1 342.3 265V266.9Z"/><path d="M275.3 267V265.1A1.6 1.6 0 0 1 278.6 265.1V267Z"/><path d="M283.3 267V265.1A1.6 1.6 0 0 1 286.6 265.1V267Z"/><path d="M255.7 267.7V265.7A1.6 1.6 0 0 1 258.9 265.7V267.7Z"/><path d="M366.8 267.7V265.7A1.6 1.6 0 0 1 370 265.7V267.7Z"/><path d="M339.7 267.8V265.8A1.6 1.6 0 0 1 342.9 265.8V267.8Z"/><path d="M283.5 267.9V265.9A1.6 1.6 0 0 1 286.8 265.9V267.9Z"/><path d="M346.5 268V266.1A1.6 1.6 0 0 1 349.7 266.1V268Z"/><path d="M291.2 268.1V266.1A1.6 1.6 0 0 1 294.4 266.1V268.1Z"/><path d="M354.4 268.2V266.2A1.6 1.6 0 0 1 357.6 266.2V268.2Z"/><path d="M290.8 268.2V266.2A1.6 1.6 0 0 1 294.1 266.2V268.2Z"/><path d="M242.9 268.3V266.3A1.6 1.6 0 0 1 246.1 266.3V268.3Z"/><path d="M283.5 268.5V266.5A1.6 1.6 0 0 1 286.7 266.5V268.5Z"/><path d="M294 268.5V266.5A1.6 1.6 0 0 1 297.3 266.5V268.5Z"/><path d="M268.4 268.7V266.8A1.6 1.6 0 0 1 271.7 266.8V268.7Z"/><path d="M361.1 268.8V266.8A1.6 1.6 0 0 1 364.3 266.8V268.8Z"/><path d="M242 269.1V267.1A1.6 1.6 0 0 1 245.2 267.1V269.1Z"/><path d="M354.6 269.1V267.1A1.6 1.6 0 0 1 357.9 267.1V269.1Z"/><path d="M289.9 269.2V267.2A1.6 1.6 0 0 1 293.1 267.2V269.2Z"/><path d="M366.5 269.3V267.4A1.6 1.6 0 0 1 369.8 267.4V269.3Z"/><path d="M309.8 269.3V267.4A1.6 1.6 0 0 1 313 267.4V269.3Z"/><path d="M311.7 269.8V267.8A1.6 1.6 0 0 1 314.9 267.8V269.8Z"/><path d="M351.8 269.8V267.9A1.6 1.6 0 0 1 355 267.9V269.8Z"/><path d="M267.2 269.8V267.9A1.6 1.6 0 0 1 270.5 267.9V269.8Z"/><path d="M352.8 269.9V267.9A1.6 1.6 0 0 1 356 267.9V269.9Z"/><path d="M345.5 270.7V268.7A1.6 1.6 0 0 1 348.8 268.7V270.7Z"/><path d="M233.4 271V269.1A1.6 1.6 0 0 1 236.7 269.1V271Z"/><path d="M258.6 271.1V269.1A1.6 1.6 0 0 1 261.9 269.1V271.1Z"/><path d="M279.4 271.3V269.3A1.6 1.6 0 0 1 282.7 269.3V271.3Z"/><path d="M348.4 271.4V269.5A1.6 1.6 0 0 1 351.7 269.5V271.4Z"/><path d="M263.3 271.5V269.5A1.6 1.6 0 0 1 266.6 269.5V271.5Z"/><path d="M242.8 271.8V269.8A1.6 1.6 0 0 1 246 269.8V271.8Z"/><path d="M259.7 271.8V269.9A1.6 1.6 0 0 1 263 269.9V271.8Z"/><path d="M236.2 272.1V270.2A1.6 1.6 0 0 1 239.5 270.2V272.1Z"/><path d="M287.9 272.5V270.5A1.6 1.6 0 0 1 291.2 270.5V272.5Z"/><path d="M318.2 272.5V270.5A1.6 1.6 0 0 1 321.5 270.5V272.5Z"/><path d="M350.1 272.9V270.9A1.6 1.6 0 0 1 353.4 270.9V272.9Z"/><path d="M298.2 273.2V271.2A1.6 1.6 0 0 1 301.4 271.2V273.2Z"/><path d="M260.3 273.4V271.4A1.6 1.6 0 0 1 263.6 271.4V273.4Z"/><path d="M276 273.5V271.5A1.6 1.6 0 0 1 279.3 271.5V273.5Z"/><path d="M316.4 273.6V271.6A1.6 1.6 0 0 1 319.6 271.6V273.6Z"/><path d="M327.8 273.7V271.7A1.6 1.6 0 0 1 331.1 271.7V273.7Z"/><path d="M266.1 273.8V271.8A1.6 1.6 0 0 1 269.4 271.8V273.8Z"/><path d="M271.9 274.4V272.4A1.6 1.6 0 0 1 275.1 272.4V274.4Z"/><path d="M281 274.5V272.5A1.6 1.6 0 0 1 284.2 272.5V274.5Z"/><path d="M252.1 275.1V273.1A1.6 1.6 0 0 1 255.4 273.1V275.1Z"/><path d="M284.7 275.4V273.4A1.6 1.6 0 0 1 288 273.4V275.4Z"/><path d="M247.5 275.5V273.5A1.6 1.6 0 0 1 250.8 273.5V275.5Z"/><path d="M323.2 275.6V273.6A1.6 1.6 0 0 1 326.5 273.6V275.6Z"/><path d="M298.6 276V274.1A1.6 1.6 0 0 1 301.9 274.1V276Z"/><path d="M308 276.2V274.2A1.6 1.6 0 0 1 311.3 274.2V276.2Z"/><path d="M241.4 276.6V274.6A1.7 1.7 0 0 1 244.7 274.6V276.6Z"/><path d="M306.2 276.7V274.7A1.7 1.7 0 0 1 309.5 274.7V276.7Z"/><path d="M254.3 276.8V274.8A1.7 1.7 0 0 1 257.6 274.8V276.8Z"/><path d="M246.9 277.1V275.1A1.7 1.7 0 0 1 250.2 275.1V277.1Z"/><path d="M323.8 277.1V275.1A1.7 1.7 0 0 1 327.1 275.1V277.1Z"/><path d="M290.8 277.8V275.8A1.7 1.7 0 0 1 294.1 275.8V277.8Z"/><path d="M253.9 277.9V275.9A1.7 1.7 0 0 1 257.2 275.9V277.9Z"/><path d="M295.6 278V276A1.7 1.7 0 0 1 299 276V278Z"/><path d="M316.5 278.3V276.3A1.7 1.7 0 0 1 319.8 276.3V278.3Z"/><path d="M267.6 278.5V276.5A1.7 1.7 0 0 1 270.9 276.5V278.5Z"/><path d="M264.4 278.6V276.6A1.7 1.7 0 0 1 267.7 276.6V278.6Z"/><path d="M253.5 278.6V276.6A1.7 1.7 0 0 1 256.9 276.6V278.6Z"/><path d="M304.5 278.8V276.8A1.7 1.7 0 0 1 307.8 276.8V278.8Z"/><path d="M283.1 279.5V277.5A1.7 1.7 0 0 1 286.4 277.5V279.5Z"/><path d="M300.6 279.6V277.6A1.7 1.7 0 0 1 304 277.6V279.6Z"/><path d="M260.6 279.6V277.6A1.7 1.7 0 0 1 263.9 277.6V279.6Z"/><path d="M298.9 280V278A1.7 1.7 0 0 1 302.2 278V280Z"/><path d="M300.5 280.3V278.3A1.7 1.7 0 0 1 303.9 278.3V280.3Z"/><path d="M321 280.4V278.4A1.7 1.7 0 0 1 324.3 278.4V280.4Z"/><path d="M265.8 280.5V278.5A1.7 1.7 0 0 1 269.1 278.5V280.5Z"/><path d="M263.6 280.5V278.5A1.7 1.7 0 0 1 266.9 278.5V280.5Z"/><path d="M301.6 280.5V278.5A1.7 1.7 0 0 1 304.9 278.5V280.5Z"/><path d="M274.4 281V279A1.7 1.7 0 0 1 277.8 279V281Z"/><path d="M308 281.5V279.4A1.7 1.7 0 0 1 311.3 279.4V281.5Z"/><path d="M255.6 281.5V279.5A1.7 1.7 0 0 1 259 279.5V281.5Z"/><path d="M282.8 281.9V279.9A1.7 1.7 0 0 1 286.1 279.9V281.9Z"/><path d="M292.2 281.9V279.9A1.7 1.7 0 0 1 295.6 279.9V281.9Z"/><path d="M285.3 282.4V280.4A1.7 1.7 0 0 1 288.6 280.4V282.4Z"/><path d="M272.7 283.5V281.4A1.7 1.7 0 0 1 276 281.4V283.5Z"/><path d="M266.2 283.5V281.5A1.7 1.7 0 0 1 269.6 281.5V283.5Z"/><path d="M272.8 284.5V282.4A1.7 1.7 0 0 1 276.2 282.4V284.5Z"/><path d="M287.7 284.6V282.6A1.7 1.7 0 0 1 291 282.6V284.6Z"/><path d="M280.6 285.2V283.1A1.7 1.7 0 0 1 284 283.1V285.2Z"/><path d="M262.2 285.2V283.2A1.7 1.7 0 0 1 265.6 283.2V285.2Z"/><path d="M290.9 285.6V283.6A1.7 1.7 0 0 1 294.3 283.6V285.6Z"/><path d="M296.2 286.4V284.3A1.7 1.7 0 0 1 299.6 284.3V286.4Z"/><path d="M286.5 286.4V284.3A1.7 1.7 0 0 1 289.9 284.3V286.4Z"/><path d="M287.5 286.7V284.6A1.7 1.7 0 0 1 290.9 284.6V286.7Z"/><path d="M291.3 287.7V285.7A1.7 1.7 0 0 1 294.7 285.7V287.7Z"/><path d="M264.7 287.9V285.9A1.7 1.7 0 0 1 268.1 285.9V287.9Z"/><path d="M270.3 289.6V287.6A1.7 1.7 0 0 1 273.7 287.6V289.6Z"/></g><path d="M-10045.8 2403.6L1819.9 -102.3" stroke="#c26e66" stroke-width="1" fill="none" clip-path="url(#pc)" opacity="0.85"/><path d="M4030.6 2368.8L-342.7 -128.8" stroke="#82a848" stroke-width="1.35" fill="none" clip-path="url(#pc)"/><path d="M-8.2 179.9L287.4 132.4L647.3 281.5L247.4 406.3Z" fill="none" stroke="#eda23e" stroke-width="1.8" clip-path="url(#cp)"/><path d="M232.2 223.2A43 43 0 0 1 318.2 223.2" fill="none" stroke="#262626" stroke-width="1.1"/><path d="M243.2 223.2A32 32 0 0 1 307.2 223.2" fill="none" stroke="#262626" stroke-width="1.1"/><path d="M253.7 223.2A21.5 21.5 0 0 1 296.7 223.2" fill="none" stroke="#262626" stroke-width="1.1"/><path d="M274.4 225L278.5 205" stroke="#262626" stroke-width="1.1"/><circle cx="274.4" cy="225" r="2.1" fill="#f2a23a" stroke="#2a2010" stroke-width="0.7"/></svg>
<div id="props">
  <!-- separator -->
  <div class="abs" style="left:0;top:0;width:2px;height:512px;background:#1d1d1d"></div>
  <!-- header -->
  
  <div class="abs" style="left:8.7px;top:-3px;width:20.3px;height:15.5px;background:#2b2b2b;border-radius:4px"></div>
  <svg class="abs" style="left:9px;top:0" width="21" height="13" viewBox="0 0 21 13">
    <rect x="1.7" y="1.2" width="10.3" height="4.8" rx="2.4" fill="#cfcfcf"/><rect x="7" y="2.1" width="4.2" height="3" rx="1.5" fill="#3a3a3a"/>
    <rect x="1.7" y="7.1" width="10.3" height="4.8" rx="2.4" fill="#cfcfcf"/><circle cx="9.6" cy="9.5" r="1.6" fill="#1e1e1e"/>
    <path d="M13.9 5l2.4 2.4 2.4-2.4" fill="none" stroke="#c4c4c4" stroke-width="1.2"/>
  </svg>
  <svg class="abs" style="left:39.5px;top:1px" width="11" height="11" viewBox="0 0 11 11">
    <path d="M0.5 2.5V0.5H2.5M8.5 0.5H10.5V2.5M10.5 8.5V10.5H8.5M2.5 10.5H0.5V8.5" fill="none" stroke="#bdbdbd" stroke-width="1"/>
    <rect x="2.6" y="2.6" width="5.8" height="5.8" rx="0.8" fill="#d0d0d0"/>
  </svg>
  <div class="t" style="left:56.5px;top:2.6px;font-size:8px;line-height:10px;color:#d4d4d4;-webkit-text-stroke:0">ground</div>
  <svg class="abs" style="left:219px;top:1px" width="13" height="12" viewBox="0 0 13 12">
    <path d="M2.6 4.3L5.6 3.6L8.4 0.6L10.8 3.2L7.8 6.2L7.4 8.6Z" fill="none" stroke="#8e8e8e" stroke-width="1" stroke-linejoin="round"/><path d="M4.6 6.6L1.2 10.2" stroke="#8e8e8e" stroke-width="1.1" stroke-linecap="round"/>
  </svg>

  <!-- tab column -->
  <div class="abs" style="left:0;top:16px;width:21.5px;height:496px;background:#232323"></div>
  <div class="abs" style="left:3.3px;top:22px;width:18.2px;height:18px;background:#292929;border-radius:3px"></div><div class="abs" style="left:3.3px;top:47.3px;width:18.2px;height:18px;background:#292929;border-radius:3px"></div><div class="abs" style="left:3.3px;top:67.5px;width:18.2px;height:18px;background:#292929;border-radius:3px"></div><div class="abs" style="left:3.3px;top:87.6px;width:18.2px;height:18px;background:#292929;border-radius:3px"></div><div class="abs" style="left:3.3px;top:107.6px;width:18.2px;height:18px;background:#292929;border-radius:3px"></div><div class="abs" style="left:3.3px;top:127.7px;width:18.2px;height:18px;background:#292929;border-radius:3px"></div><div class="abs" style="left:3.3px;top:152.8px;width:18.2px;height:18px;background:#292929;border-radius:3px"></div><div class="abs" style="left:3.3px;top:173px;width:18.2px;height:18px;background:#292929;border-radius:3px"></div><div class="abs" style="left:3.3px;top:193px;width:18.2px;height:18px;background:#292929;border-radius:3px"></div><div class="abs" style="left:3.3px;top:212.9px;width:19px;height:18.2px;background:#424242;border-radius:3px 0 0 3px"></div><div class="abs" style="left:3.3px;top:232.8px;width:18.2px;height:18px;background:#292929;border-radius:3px"></div><div class="abs" style="left:3.3px;top:252.8px;width:18.2px;height:18px;background:#292929;border-radius:3px"></div><div class="abs" style="left:3.3px;top:272.7px;width:18.2px;height:18px;background:#292929;border-radius:3px"></div><div class="abs" style="left:3.3px;top:297.8px;width:18.2px;height:18px;background:#292929;border-radius:3px"></div><svg class="abs" style="left:6px;top:25.5px" width="11" height="11" viewBox="0 0 11 11"><path d="M2.7 0.6V4.2" stroke="#c9c9c9" stroke-width="1.3"/><path d="M1.2 6.3Q2.7 4.9 4.2 6.3V9.2Q2.7 10.9 1.2 9.2Z" fill="#c9c9c9"/><path d="M6.3 0.4V2.6Q8 4.4 9.7 2.6V0.4M8 3.6V10.6" fill="none" stroke="#c9c9c9" stroke-width="1.5"/></svg><svg class="abs" style="left:6px;top:50.8px" width="11" height="11" viewBox="0 0 11 11"><rect x="0.8" y="2.8" width="9.6" height="7" rx="1" fill="#3a3a3a" stroke="#c9c9c9" stroke-width="1.1"/><path d="M2 2.8Q2.6 1.2 4 1.2H5.5Q6.8 1.2 7.3 2.8Z" fill="#c9c9c9"/><rect x="2.2" y="4.2" width="4.6" height="4.3" fill="#4a4a4a"/><rect x="7.8" y="4.4" width="1.8" height="1.1" fill="#c9c9c9"/><rect x="7.8" y="6.5" width="1.8" height="1.1" fill="#c9c9c9"/></svg><svg class="abs" style="left:6px;top:71px" width="11" height="11" viewBox="0 0 11 11"><rect x="0.6" y="0.8" width="9.8" height="3.6" rx="0.9" fill="#c9c9c9"/><path d="M2.2 4.4V10.2H8.8V4.4" fill="#333" stroke="#c9c9c9" stroke-width="1.1"/><path d="M3.6 9L5.2 6.6L7.2 9Z" fill="#c9c9c9"/></svg><svg class="abs" style="left:6px;top:91.1px" width="11" height="11" viewBox="0 0 11 11"><rect x="0.3" y="2.8" width="7.6" height="7.6" rx="1" fill="#8c8c8c"/><rect x="2.9" y="0.6" width="7.4" height="7.4" rx="0.8" fill="#3a3a3a" stroke="#c9c9c9" stroke-width="1.1"/><path d="M3.6 7.4L6 3.6L7.6 5.8L8.4 5L9.6 7.4Z" fill="#c9c9c9"/></svg><svg class="abs" style="left:6px;top:111.1px" width="11" height="11" viewBox="0 0 11 11"><path d="M3.6 0.8L6.8 8.2Q3.6 9.8 0.4 8.2Z" fill="#bdbdbd"/><circle cx="8.6" cy="1.9" r="1.4" fill="#c9c9c9"/><circle cx="8" cy="7.8" r="2.5" fill="#2a2a2a" stroke="#c9c9c9" stroke-width="1.1"/></svg><svg class="abs" style="left:6px;top:131.2px" width="11" height="11" viewBox="0 0 11 11"><circle cx="5.5" cy="5.5" r="4.3" fill="#4a2a24" stroke="#d97c6a" stroke-width="1.1"/><path d="M3 2.5Q5 2 5.5 4Q4 5 5 6.5Q7 7 6.5 9.5Q4 9.5 2.5 7.5Q3.5 6 2.2 4.5Z" fill="#d97c6a"/><path d="M0.6 10.6Q4 6 10.4 0.6" fill="none" stroke="#d97c6a" stroke-width="1.1"/></svg><svg class="abs" style="left:6px;top:156.3px" width="11" height="11" viewBox="0 0 11 11"><path d="M0.6 3V0.6H3M8 0.6H10.4V3M10.4 8V10.4H8M3 10.4H0.6V8" fill="none" stroke="#c07a38" stroke-width="1.1"/><rect x="2.6" y="2.6" width="5.8" height="5.8" rx="0.7" fill="#f0a04a"/></svg><svg class="abs" style="left:6px;top:176.5px" width="11" height="11" viewBox="0 0 11 11"><path d="M1.6 9.6L5.8 5.4" stroke="#5f93dc" stroke-width="2.1" stroke-linecap="round"/><path d="M5 4.6A3.1 3.1 0 0 1 8.2 0.8L6.9 2.6L8.5 4.2L10.3 2.9A3.1 3.1 0 0 1 6.5 6.1Z" fill="#5f93dc"/></svg><svg class="abs" style="left:6px;top:196.5px" width="11" height="11" viewBox="0 0 11 11"><path d="M2.4 2.4H8.8M2.4 2.4L8.8 8.8M2.4 2.4V8.6" stroke="#5f93dc" stroke-width="0.9"/><circle cx="2.4" cy="2.4" r="1.9" fill="#5f93dc"/><circle cx="8.8" cy="2.4" r="1" fill="#5f93dc"/><circle cx="2.4" cy="9" r="1" fill="#5f93dc"/><circle cx="8.8" cy="8.8" r="1.4" fill="#5f93dc"/></svg><svg class="abs" style="left:6px;top:216.5px" width="11" height="11" viewBox="0 0 11 11"><path d="M8.6 2.3A4.6 4.6 0 1 0 10 6.6" fill="none" stroke="#5f93dc" stroke-width="1.1"/><circle cx="5.3" cy="5.9" r="2.2" fill="#9fb9e6"/><circle cx="9.5" cy="1.6" r="1.3" fill="#5f93dc"/></svg><svg class="abs" style="left:6px;top:236.3px" width="11" height="11" viewBox="0 0 11 11"><path d="M1.5 8.2Q0.3 5.8 3 4.2L7 1.8Q9.6 0.6 10.4 2.8Q11 4.8 8.6 6.2L4.8 8.6Q2.6 9.8 1.5 8.2Z" fill="none" stroke="#5f93dc" stroke-width="1.1"/><circle cx="3.8" cy="6.9" r="2.3" fill="#2a2a2a" stroke="#5f93dc" stroke-width="1.1"/><circle cx="3.8" cy="6.9" r="0.9" fill="#5f93dc"/></svg><svg class="abs" style="left:6px;top:256.3px" width="11" height="11" viewBox="0 0 11 11"><path d="M2.2 2H8.8L5.5 8" fill="none" stroke="#4fb3c0" stroke-width="1"/><path d="M2.2 2L5.5 8" stroke="#4fb3c0" stroke-width="1"/><circle cx="1.8" cy="2" r="1.4" fill="#2a2a2a" stroke="#4fb3c0" stroke-width="0.9"/><circle cx="9.2" cy="2" r="1.4" fill="#2a2a2a" stroke="#4fb3c0" stroke-width="0.9"/><rect x="4.3" y="8" width="2.4" height="2.4" fill="#2a2a2a" stroke="#4fb3c0" stroke-width="0.9"/></svg><svg class="abs" style="left:6px;top:276.2px" width="11" height="11" viewBox="0 0 11 11"><circle cx="5.5" cy="5.5" r="4.7" fill="#d97c6a"/><path d="M5.5 1.3V5.5H9.7A4.2 4.2 0 0 0 5.5 1.3Z" fill="#f4e8e4"/><path d="M5.5 5.5L2.6 8.6A4.2 4.2 0 0 0 5.5 9.8Z" fill="#2a2a2a"/></svg><svg class="abs" style="left:6px;top:301.3px" width="11" height="11" viewBox="0 0 11 11"><rect x="1" y="1" width="9" height="9" rx="0.6" fill="#d97c6a"/><rect x="1.0" y="2.8" width="1.8" height="1.8" fill="#2a1f1f"/><rect x="1.0" y="6.4" width="1.8" height="1.8" fill="#2a1f1f"/><rect x="2.8" y="1.0" width="1.8" height="1.8" fill="#2a1f1f"/><rect x="2.8" y="4.6" width="1.8" height="1.8" fill="#2a1f1f"/><rect x="2.8" y="8.2" width="1.8" height="1.8" fill="#2a1f1f"/><rect x="4.6" y="2.8" width="1.8" height="1.8" fill="#2a1f1f"/><rect x="4.6" y="6.4" width="1.8" height="1.8" fill="#2a1f1f"/><rect x="6.4" y="1.0" width="1.8" height="1.8" fill="#2a1f1f"/><rect x="6.4" y="4.6" width="1.8" height="1.8" fill="#2a1f1f"/><rect x="6.4" y="8.2" width="1.8" height="1.8" fill="#2a1f1f"/><rect x="8.2" y="2.8" width="1.8" height="1.8" fill="#2a1f1f"/><rect x="8.2" y="6.4" width="1.8" height="1.8" fill="#2a1f1f"/></svg>

  <!-- content -->
  <div class="t" style="left:33px;top:23.8px">物理演算を有効</div>
  <div class="btn" style="top:39.9px"><svg width="11" height="11.5" viewBox="0 0 11 11.5" style="left:2.3px;top:0.6px"><path d="M1.5 1L4 3.5L1.5 6L4 8.5L1.5 11M4.5 1L7 3.5L4.5 6L7 8.5L4.5 11M7.5 1L10 3.5L7.5 6L10 8.5L7.5 11" fill="none" stroke="#cfcfcf" stroke-width="0.9"/></svg><div class="lbl">フォースフィールド</div></div><div class="btn" style="top:55.54px"><svg width="11" height="11.5" viewBox="0 0 11 11.5" style="left:2.3px;top:0.6px"><path d="M2.8 3.2L7.8 8.2M7.8 3.2L2.8 8.2" stroke="#cfcfcf" stroke-width="0.9"/></svg><div class="lbl">コリジョン</div></div><div class="btn" style="top:71.18px"><svg width="11" height="11.5" viewBox="0 0 11 11.5" style="left:2.3px;top:0.6px"><path d="M3.5 1L1 2.5V5.5H2.5V10.5H8.5V5.5H10V2.5L7.5 1Q5.5 4 3.5 1Z" fill="none" stroke="#cfcfcf" stroke-width="1"/></svg><div class="lbl">クロス</div></div><div class="btn" style="top:86.82px"><svg width="11" height="11.5" viewBox="0 0 11 11.5" style="left:2.3px;top:0.6px"><path d="M2 10Q0.5 7 3.5 4.5Q6.5 2.5 8.5 4.5Q9.5 6 7.5 6.5Q5 7 3 10.5Z" fill="none" stroke="#cfcfcf" stroke-width="1"/><circle cx="5" cy="1.5" r="0.6" fill="#cfcfcf"/><circle cx="6.5" cy="1.7" r="0.6" fill="#cfcfcf"/><circle cx="8.5" cy="2.2" r="0.7" fill="#cfcfcf"/></svg><div class="lbl">ダイナミックペイント</div></div><div class="btn" style="top:102.46px"><svg width="11" height="11.5" viewBox="0 0 11 11.5" style="left:2.3px;top:0.6px"><path d="M1.5 10Q0 5 4 2Q7 0.5 9.5 1.5L1.5 10" fill="none" stroke="#cfcfcf" stroke-width="1"/><path d="M3 4.5L6.5 1.5M2.5 7L5 5" stroke="#cfcfcf" stroke-width="0.8"/><path d="M6.5 6.5Q9 6 9 8Q9 10 6.5 9.5" fill="none" stroke="#cfcfcf" stroke-width="0.9"/></svg><div class="lbl">ソフトボディ</div></div><div class="btn" style="top:118.1px"><svg width="11" height="11.5" viewBox="0 0 11 11.5" style="left:2.3px;top:0.6px"><path d="M5.5 1Q2 5.5 2 7.2A3.5 3.5 0 0 0 9 7.2Q9 5.5 5.5 1Z" fill="none" stroke="#cfcfcf" stroke-width="1.1"/><path d="M3.7 7.2A1.8 1.8 0 0 0 5.5 9" fill="none" stroke="#cfcfcf" stroke-width="0.8"/></svg><div class="lbl">流体</div></div><div class="btn" style="top:133.74px"><svg width="11" height="11.5" viewBox="0 0 11 11.5" style="left:2.3px;top:0.6px"><path d="M0.8 1V10.5M10.2 1V10.5M0.8 2.3H10.2M0.8 9H10.2M1.5 3L9.5 8.5M9.5 3L1.5 8.5" fill="none" stroke="#cfcfcf" stroke-width="1"/></svg><div class="lbl">リジッドボディ</div></div><div class="btn" style="top:149.38px"><svg width="11" height="11.5" viewBox="0 0 11 11.5" style="left:2.3px;top:0.6px"><path d="M1 1.2H10M1 2.8H10M3 1.2V2.8M8 1.2V2.8M5.5 2.8V6" fill="none" stroke="#cfcfcf" stroke-width="1"/><ellipse cx="5.5" cy="8.3" rx="1.6" ry="2.2" fill="none" stroke="#cfcfcf" stroke-width="1"/></svg><div class="lbl">リジッドボディコンストレイント</div></div>

  <!-- collision panel -->
  <div class="abs" style="left:22px;top:163.5px;width:213px;height:22.5px;background:#3e3e3e"></div>
  <div class="abs" style="left:22px;top:186px;width:213px;height:42.4px;background:#383838"></div>
  <div class="abs" style="left:22px;top:228.4px;width:213px;height:116.3px;background:#2f2f2f"></div>
  <div class="abs" style="left:22px;top:344.7px;width:213px;height:17.2px;background:#383838"></div>
  <div class="abs" style="left:22px;top:361.9px;width:213px;height:104px;background:#303030"></div>
  <svg class="abs" style="left:27px;top:173.3px" width="7" height="6" viewBox="0 0 7 6"><path d="M1 1H6L3.5 5Z" fill="#bdbdbd"/></svg><div class="t" style="left:38px;top:172.4px;font-size:8px">コリジョン</div><svg class="abs" style="left:224px;top:173px" width="9" height="7" viewBox="0 0 9 7"><rect x="0" y="0" width="1" height="1" fill="#525252"/><rect x="0" y="2" width="1" height="1" fill="#525252"/><rect x="0" y="4" width="1" height="1" fill="#525252"/><rect x="2" y="0" width="1" height="1" fill="#525252"/><rect x="2" y="2" width="1" height="1" fill="#525252"/><rect x="2" y="4" width="1" height="1" fill="#525252"/><rect x="4" y="0" width="1" height="1" fill="#525252"/><rect x="4" y="2" width="1" height="1" fill="#525252"/><rect x="4" y="4" width="1" height="1" fill="#525252"/><rect x="6" y="0" width="1" height="1" fill="#525252"/><rect x="6" y="2" width="1" height="1" fill="#525252"/><rect x="6" y="4" width="1" height="1" fill="#525252"/><rect x="8" y="0" width="1" height="1" fill="#525252"/><rect x="8" y="2" width="1" height="1" fill="#525252"/><rect x="8" y="4" width="1" height="1" fill="#525252"/></svg><div class="abs" style="left:122px;top:190.4px;width:96.5px;height:15.6px;background:#e01010"></div><div class="abs" style="left:124px;top:192.6px;width:92.5px;height:11.2px;background:#5680c2"></div><div class="t" style="left:124px;top:192.6px;width:92.5px;text-align:center;font-size:8.6px;line-height:11.4px;color:#e4e8ee;-webkit-text-stroke:0">1.00</div><div class="lab" style="top:193px">フィールドの吸収</div><div class="dot" style="top:196.8px"></div><svg class="abs" style="left:37px;top:217.5px" width="7" height="6" viewBox="0 0 7 6"><path d="M1 1H6L3.5 5Z" fill="#bdbdbd"/></svg><div class="t" style="left:47.5px;top:215.5px">パーティクル</div><div class="fld" style="top:235px;height:12.4px;border-radius:3px"><div class="v" style="line-height:12.4px">0.000</div></div><div class="lab" style="top:237px">透過度</div><div class="dot" style="top:239.7px"></div><div class="fld" style="top:250.8px;height:12.4px;border-radius:3px"><div class="v" style="line-height:12.4px">0.000</div></div><div class="lab" style="top:252.8px">付着度</div><div class="dot" style="top:255.5px"></div><div class="cb" style="top:268.2px"></div><div class="lab" style="top:268.3px;right:34.6px">パーティクル消滅</div><div class="dot" style="top:271px"></div><div class="fld" style="top:282px;height:26.2px"><div class="v" style="top:0;line-height:12.6px">0.000</div><div class="abs" style="left:0;right:0;top:12.6px;height:1px;background:#3d3d3d"></div><div class="v" style="top:13.4px;line-height:12.6px">0.000</div></div><div class="lab" style="top:284.1px">減衰</div><div class="lab" style="top:297.1px">ランダム化</div><div class="dot" style="top:286.8px"></div><div class="dot" style="top:300px"></div><div class="fld" style="top:311.8px;height:26.2px"><div class="v" style="top:0;line-height:12.6px">0.000</div><div class="abs" style="left:0;right:0;top:12.6px;height:1px;background:#3d3d3d"></div><div class="v" style="top:13.4px;line-height:12.6px">0.000</div></div><div class="lab" style="top:313.9px">摩擦</div><div class="lab" style="top:326.9px">ランダム化</div><div class="dot" style="top:316.6px"></div><div class="dot" style="top:329.8px"></div><svg class="abs" style="left:37px;top:350.5px" width="7" height="6" viewBox="0 0 7 6"><path d="M1 1H6L3.5 5Z" fill="#bdbdbd"/></svg><div class="t" style="left:47.5px;top:348.5px">ソフトボディとクロス</div><div class="fld" style="top:368.3px;height:12.5px;border-radius:3px"><div class="abs" style="left:0;top:0;bottom:0;width:8px;background:#5680c2"></div><div class="v" style="line-height:12.5px">0.100</div></div><div class="lab" style="top:370.4px">減衰</div><div class="dot" style="top:373.1px"></div><div class="fld" style="top:384.4px;height:12.5px;border-radius:3px"><div class="abs" style="left:0;top:0;bottom:0;width:1.2px;background:#5680c2"></div><div class="v" style="line-height:12.5px">0.020</div></div><div class="lab" style="top:386.5px">外側の厚さ</div><div class="dot" style="top:389.2px"></div><div class="fld" style="top:400.2px;height:12.5px;border-radius:3px"><div class="abs" style="left:0;top:0;bottom:0;width:17.6px;background:#5680c2"></div><div class="v" style="line-height:12.5px">0.200</div></div><div class="lab" style="top:402.3px">内側</div><div class="dot" style="top:405px"></div><div class="fld" style="top:416px;height:12.5px;border-radius:3px"><div class="v" style="line-height:12.5px">5.000</div></div><div class="lab" style="top:418.1px">摩擦</div><div class="dot" style="top:420.8px"></div><div class="cb" style="top:432.9px;background:#5680c2"><svg width="9" height="9" viewBox="0 0 9 9" style="position:absolute;left:0;top:0"><path d="M1.8 4.6L3.6 6.5L7.4 2.3" fill="none" stroke="#fff" stroke-width="1.1"/></svg></div><div class="lab" style="top:433.3px;right:34.6px">片面</div><div class="dot" style="top:435.8px"></div><div class="cb" style="top:448.7px"></div><div class="lab" style="top:449px;right:34.6px">法線をオーバーライド</div><div class="dot" style="top:451.6px"></div>
</div>
</body></html>
